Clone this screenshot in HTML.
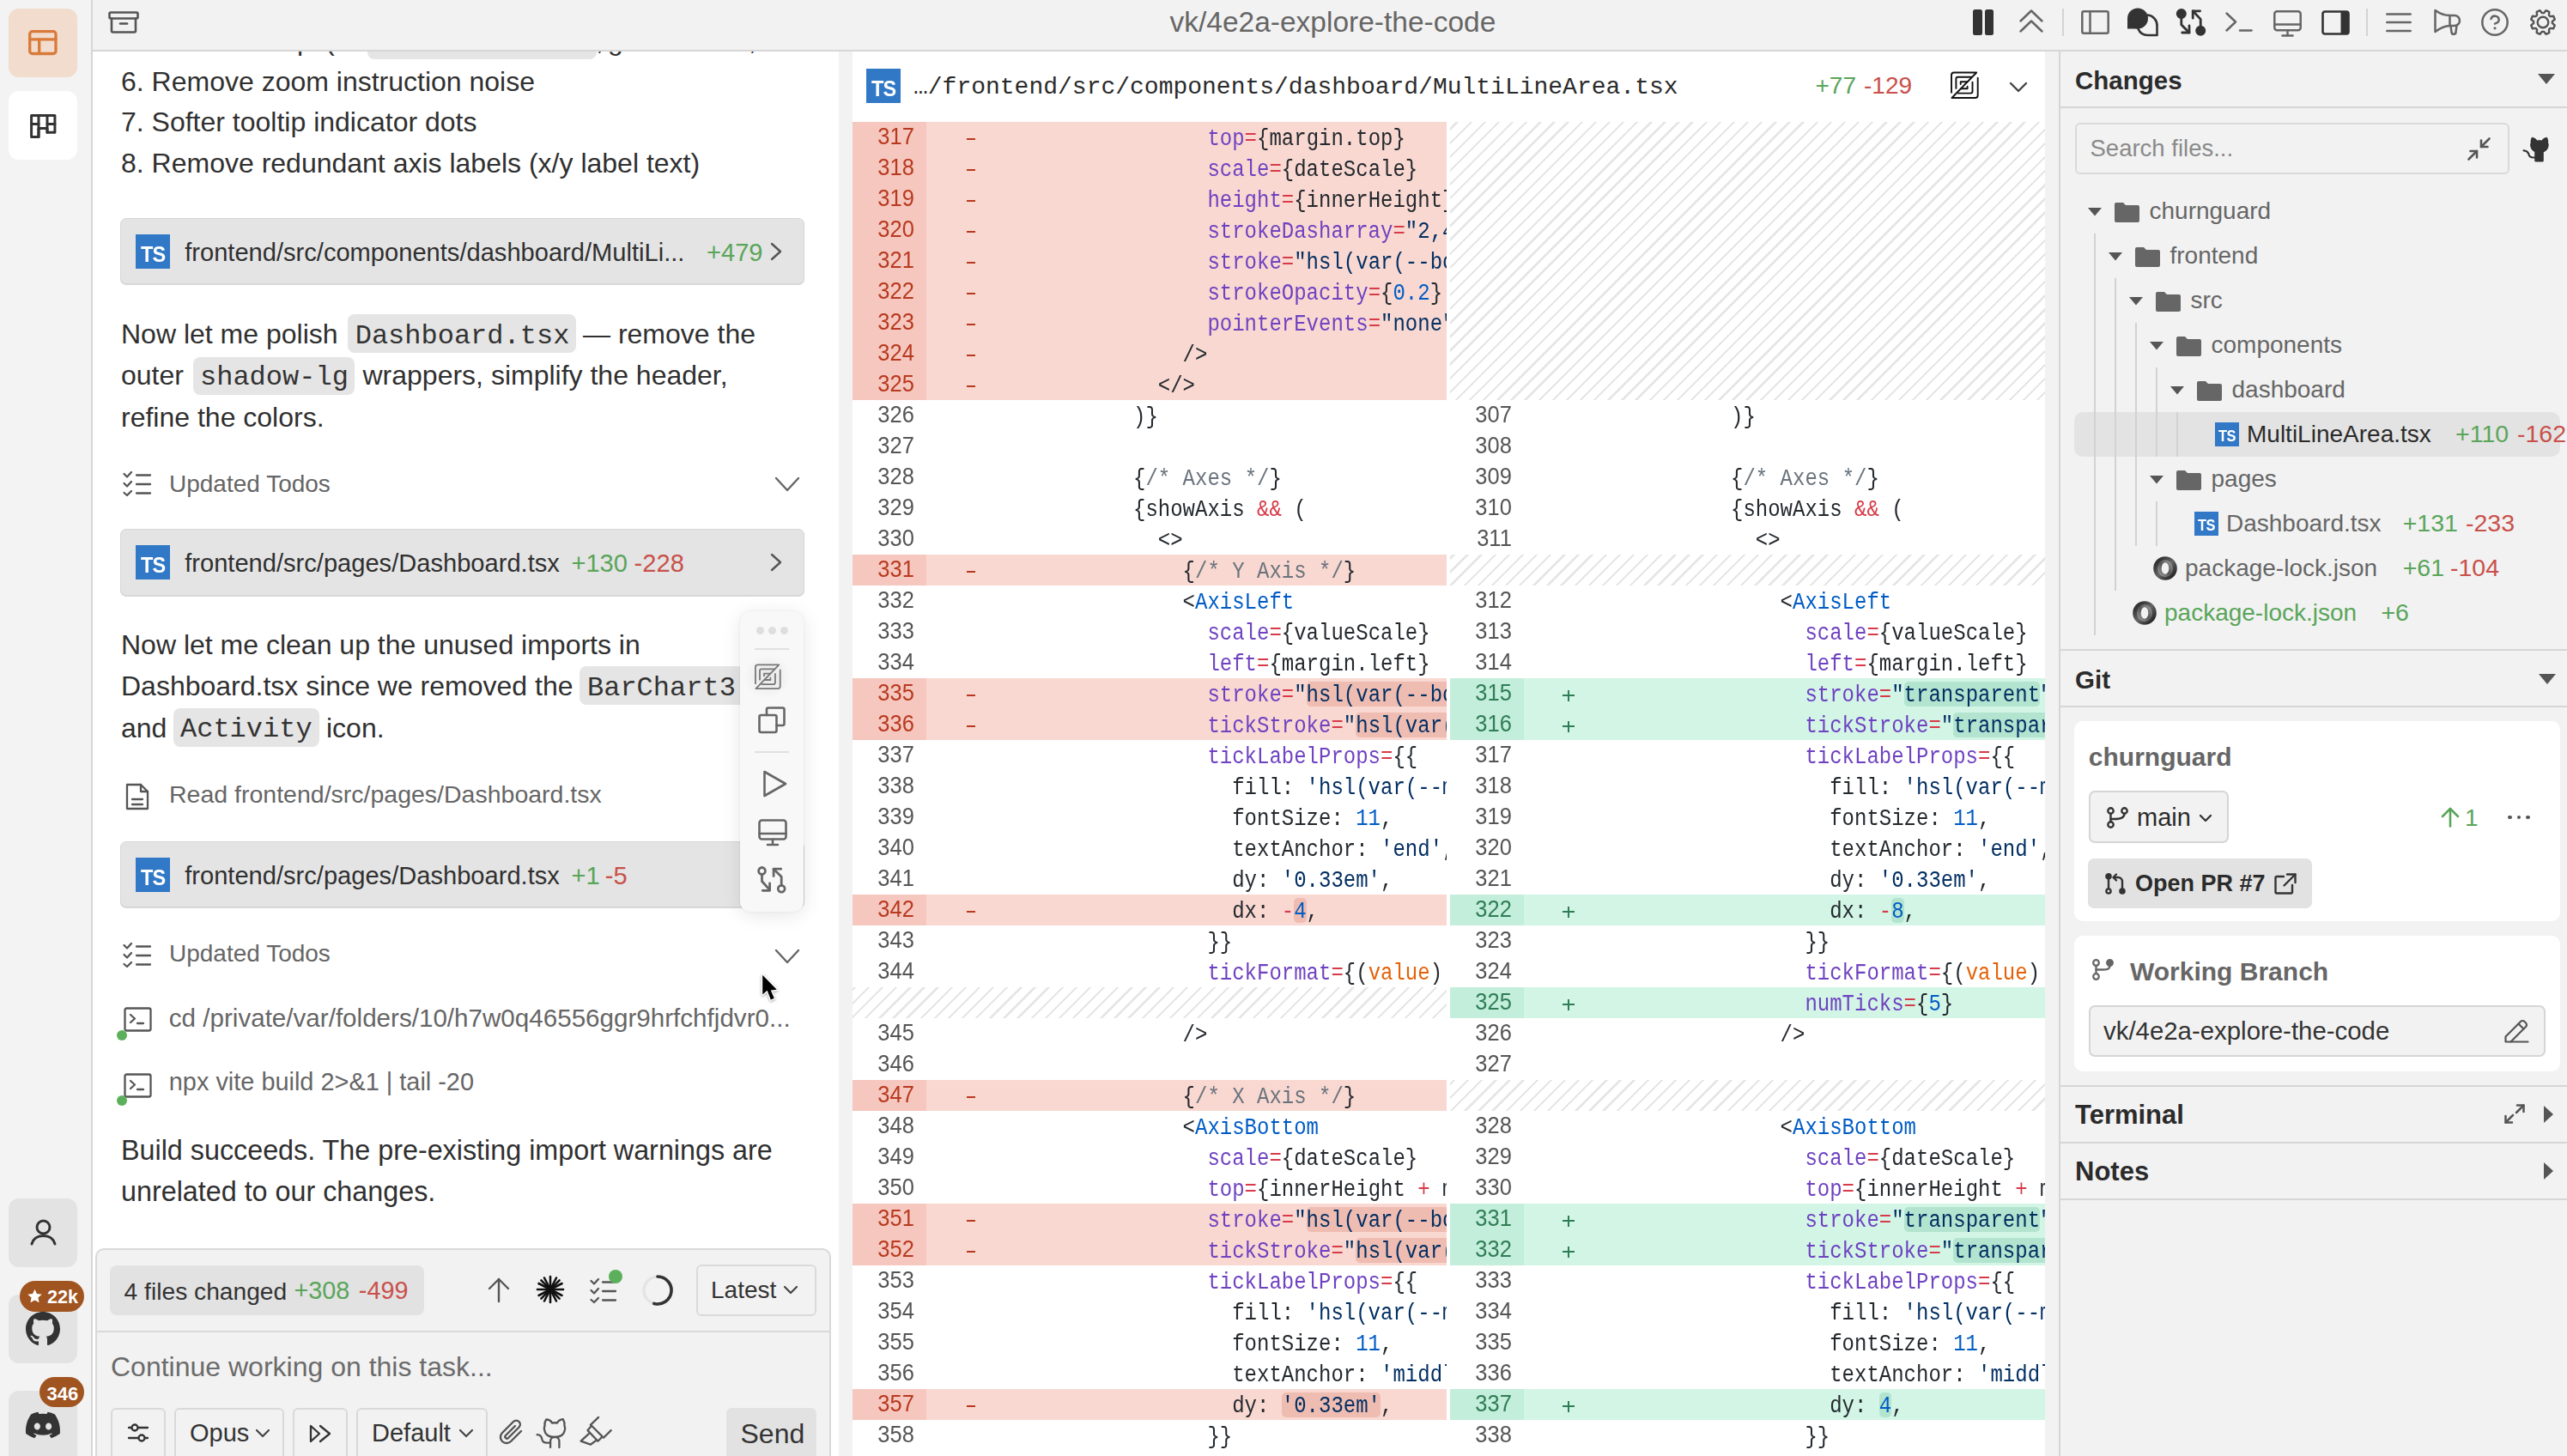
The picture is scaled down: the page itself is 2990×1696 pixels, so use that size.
<!DOCTYPE html><html><head><meta charset="utf-8"><title>vk</title><style>
*{box-sizing:border-box;margin:0;padding:0}
html,body{width:2990px;height:1696px;overflow:hidden;background:#f2f2f2;font-family:'Liberation Sans', sans-serif;color:#2b2b2b;position:relative}
.abs{position:absolute}
svg.abs{position:absolute;overflow:visible}
.t{position:absolute;white-space:pre;line-height:1}
.pane{position:absolute;overflow:hidden}
</style></head><body><div class="pane" style="left:108px;top:60px;width:869px;height:1636px;background:#fff"><div class="abs" style="left:320.0px;top:-36.0px;width:266.6px;height:44.8px;background:#e5e5e5;border-radius:8px"></div><div class="t" style="left:238.0px;top:-28.8px;font-size:32px;color:#303030;font-weight:400;font-family:'Liberation Sans', sans-serif;">p</div><div class="t" style="left:271.0px;top:-28.8px;font-size:32px;color:#303030;font-weight:400;font-family:'Liberation Sans', sans-serif;">(</div><div class="t" style="left:586.0px;top:-28.8px;font-size:32px;color:#303030;font-weight:400;font-family:'Liberation Sans', sans-serif;">,</div><div class="t" style="left:600.0px;top:-28.8px;font-size:32px;color:#303030;font-weight:400;font-family:'Liberation Sans', sans-serif;">g</div><div class="t" style="left:764.0px;top:-28.8px;font-size:32px;color:#303030;font-weight:400;font-family:'Liberation Sans', sans-serif;">,</div><div class="t" style="left:33.0px;top:18.7px;font-size:32px;color:#303030;font-weight:400;font-family:'Liberation Sans', sans-serif;">6. Remove zoom instruction noise</div><div class="t" style="left:33.0px;top:66.2px;font-size:32px;color:#303030;font-weight:400;font-family:'Liberation Sans', sans-serif;">7. Softer tooltip indicator dots</div><div class="t" style="left:33.0px;top:113.6px;font-size:32px;color:#303030;font-weight:400;font-family:'Liberation Sans', sans-serif;">8. Remove redundant axis labels (x/y label text)</div><div class="abs" style="left:32.0px;top:194.0px;width:797.0px;height:77.0px;background:#e4e4e4;border:1.5px solid #d6d6d6;border-radius:7px;box-shadow:0 1px 0 #d9d9d9"></div><div class="abs" style="left:50.0px;top:213.0px;width:40.0px;height:40.0px;background:#3178c6;"><div class="t" style="left:6.40px;top:10.10px;font-size:26.70px;font-weight:700;color:#fff;letter-spacing:-1.00px;line-height:1;transform:scaleX(0.88);transform-origin:0 0">TS</div></div><div class="t" style="left:107.2px;top:219.6px;font-size:29.1px;color:#303030;font-weight:400;font-family:'Liberation Sans', sans-serif;">frontend/src/components/dashboard/MultiLi...</div><div class="t" style="left:715.0px;top:219.6px;font-size:29.1px;color:#5aa55a;font-weight:400;font-family:'Liberation Sans', sans-serif;">+479</div><svg class="abs" style="left:789.0px;top:222.0px;" width="14" height="22" viewBox="0 0 14 22" fill="none" stroke-linecap="round" stroke-linejoin="round"><path d="M2 2 L12 11 L2 20" stroke="#555" stroke-width="2.4"/></svg><div class="abs" style="left:297.0px;top:306.0px;width:266.0px;height:45.0px;background:#e5e5e5;border-radius:8px"></div><div class="abs" style="left:116.5px;top:355.5px;width:188.3px;height:44.5px;background:#e5e5e5;border-radius:8px"></div><div class="t" style="left:33.0px;top:313.2px;font-size:32px;color:#303030;font-weight:400;font-family:'Liberation Sans', sans-serif;">Now let me polish</div><div class="t" style="left:305.7px;top:316.1px;font-size:32px;color:#333;font-weight:400;font-family:'Liberation Mono', monospace;">Dashboard.tsx</div><div class="t" style="left:571.0px;top:313.2px;font-size:32px;color:#303030;font-weight:400;font-family:'Liberation Sans', sans-serif;">— remove the</div><div class="t" style="left:33.0px;top:360.8px;font-size:32px;color:#303030;font-weight:400;font-family:'Liberation Sans', sans-serif;">outer</div><div class="t" style="left:125.0px;top:363.7px;font-size:32px;color:#333;font-weight:400;font-family:'Liberation Mono', monospace;">shadow-lg</div><div class="t" style="left:314.5px;top:360.8px;font-size:32px;color:#303030;font-weight:400;font-family:'Liberation Sans', sans-serif;">wrappers, simplify the header,</div><div class="t" style="left:33.0px;top:409.8px;font-size:32px;color:#303030;font-weight:400;font-family:'Liberation Sans', sans-serif;">refine the colors.</div><svg class="abs" style="left:35.0px;top:488.0px;" width="34" height="30" viewBox="0 0 34 30" fill="none" stroke-linecap="round" stroke-linejoin="round"><g stroke="#555" stroke-width="2.3"><path d="M1.5 4 L5 7.5 L10 2"/><path d="M1.5 15 L5 18.5 L10 13"/><path d="M1.5 26 L5 29 L10 24"/><path d="M16 5.5 H32"/><path d="M16 16 H32"/><path d="M16 26.5 H32"/></g></svg><div class="t" style="left:89.0px;top:489.8px;font-size:28px;color:#666666;font-weight:400;font-family:'Liberation Sans', sans-serif;">Updated Todos</div><svg class="abs" style="left:793.7px;top:495.0px;" width="30" height="18" viewBox="0 0 30 18" fill="none" stroke-linecap="round" stroke-linejoin="round"><path d="M2 2 L15.0 16 L28 2" stroke="#666" stroke-width="2.4"/></svg><div class="abs" style="left:32.0px;top:556.4px;width:797.0px;height:77.3px;background:#e4e4e4;border:1.5px solid #d6d6d6;border-radius:7px;box-shadow:0 1px 0 #d9d9d9"></div><div class="abs" style="left:50.0px;top:575.4px;width:40.0px;height:40.0px;background:#3178c6;"><div class="t" style="left:6.40px;top:10.10px;font-size:26.70px;font-weight:700;color:#fff;letter-spacing:-1.00px;line-height:1;transform:scaleX(0.88);transform-origin:0 0">TS</div></div><div class="t" style="left:107.2px;top:582.0px;font-size:29.1px;color:#303030;font-weight:400;font-family:'Liberation Sans', sans-serif;">frontend/src/pages/Dashboard.tsx</div><div class="t" style="left:557.4px;top:582.0px;font-size:29.1px;color:#5aa55a;font-weight:400;font-family:'Liberation Sans', sans-serif;">+130</div><div class="t" style="left:630.6px;top:582.0px;font-size:29.1px;color:#c9504a;font-weight:400;font-family:'Liberation Sans', sans-serif;">-228</div><svg class="abs" style="left:789.0px;top:584.4px;" width="14" height="22" viewBox="0 0 14 22" fill="none" stroke-linecap="round" stroke-linejoin="round"><path d="M2 2 L12 11 L2 20" stroke="#555" stroke-width="2.4"/></svg><div class="abs" style="left:567.4px;top:716.0px;width:204.6px;height:45.0px;background:#e5e5e5;border-radius:8px"></div><div class="abs" style="left:93.5px;top:765.4px;width:170.0px;height:44.6px;background:#e5e5e5;border-radius:8px"></div><div class="t" style="left:33.0px;top:674.6px;font-size:32px;color:#303030;font-weight:400;font-family:'Liberation Sans', sans-serif;">Now let me clean up the unused imports in</div><div class="t" style="left:33.0px;top:722.8px;font-size:32px;color:#303030;font-weight:400;font-family:'Liberation Sans', sans-serif;">Dashboard.tsx since we removed the</div><div class="t" style="left:576.0px;top:725.7px;font-size:32px;color:#333;font-weight:400;font-family:'Liberation Mono', monospace;">BarChart3</div><div class="t" style="left:33.0px;top:771.5px;font-size:32px;color:#303030;font-weight:400;font-family:'Liberation Sans', sans-serif;">and</div><div class="t" style="left:102.0px;top:774.4px;font-size:32px;color:#333;font-weight:400;font-family:'Liberation Mono', monospace;">Activity</div><div class="t" style="left:272.0px;top:771.5px;font-size:32px;color:#303030;font-weight:400;font-family:'Liberation Sans', sans-serif;">icon.</div><svg class="abs" style="left:36.8px;top:851.0px;" width="30" height="34" viewBox="0 0 30 34" fill="none" stroke-linecap="round" stroke-linejoin="round"><g stroke="#555" stroke-width="2.3"><path d="M3 3 H19 L27 11 V31 H3 Z"/><path d="M19 3 V11 H27"/><path d="M9 20 H21"/><path d="M9 26 H21"/></g></svg><div class="t" style="left:89.0px;top:851.1px;font-size:28.5px;color:#666666;font-weight:400;font-family:'Liberation Sans', sans-serif;">Read frontend/src/pages/Dashboard.tsx</div><div class="abs" style="left:32.0px;top:920.0px;width:797.0px;height:77.2px;background:#e4e4e4;border:1.5px solid #d6d6d6;border-radius:7px;box-shadow:0 1px 0 #d9d9d9"></div><div class="abs" style="left:50.0px;top:939.0px;width:40.0px;height:40.0px;background:#3178c6;"><div class="t" style="left:6.40px;top:10.10px;font-size:26.70px;font-weight:700;color:#fff;letter-spacing:-1.00px;line-height:1;transform:scaleX(0.88);transform-origin:0 0">TS</div></div><div class="t" style="left:107.2px;top:945.6px;font-size:29.1px;color:#303030;font-weight:400;font-family:'Liberation Sans', sans-serif;">frontend/src/pages/Dashboard.tsx</div><div class="t" style="left:557.4px;top:945.6px;font-size:29.1px;color:#5aa55a;font-weight:400;font-family:'Liberation Sans', sans-serif;">+1</div><div class="t" style="left:596.8px;top:945.6px;font-size:29.1px;color:#c9504a;font-weight:400;font-family:'Liberation Sans', sans-serif;">-5</div><svg class="abs" style="left:35.0px;top:1037.0px;" width="34" height="30" viewBox="0 0 34 30" fill="none" stroke-linecap="round" stroke-linejoin="round"><g stroke="#555" stroke-width="2.3"><path d="M1.5 4 L5 7.5 L10 2"/><path d="M1.5 15 L5 18.5 L10 13"/><path d="M1.5 26 L5 29 L10 24"/><path d="M16 5.5 H32"/><path d="M16 16 H32"/><path d="M16 26.5 H32"/></g></svg><div class="t" style="left:89.0px;top:1036.9px;font-size:28px;color:#666666;font-weight:400;font-family:'Liberation Sans', sans-serif;">Updated Todos</div><svg class="abs" style="left:793.7px;top:1044.5px;" width="30" height="18" viewBox="0 0 30 18" fill="none" stroke-linecap="round" stroke-linejoin="round"><path d="M2 2 L15.0 16 L28 2" stroke="#666" stroke-width="2.4"/></svg><svg class="abs" style="left:36.0px;top:1113.0px;" width="33" height="29" viewBox="0 0 33 29" fill="none" stroke-linecap="round" stroke-linejoin="round"><g stroke="#555" stroke-width="2.3"><rect x="1.5" y="1.5" width="30" height="26" rx="2"/><path d="M8 9 L13 13.5 L8 18"/><path d="M16 19 H23"/></g></svg><div class="abs" style="left:27.9px;top:1140.0px;width:12.0px;height:12.0px;background:#5cb05c;border-radius:50%"></div><div class="t" style="left:88.8px;top:1110.5px;font-size:29.6px;color:#666666;font-weight:400;font-family:'Liberation Sans', sans-serif;">cd /private/var/folders/10/h7w0q46556ggr9hrfchfjdvr0...</div><svg class="abs" style="left:36.0px;top:1190.0px;" width="33" height="29" viewBox="0 0 33 29" fill="none" stroke-linecap="round" stroke-linejoin="round"><g stroke="#555" stroke-width="2.3"><rect x="1.5" y="1.5" width="30" height="26" rx="2"/><path d="M8 9 L13 13.5 L8 18"/><path d="M16 19 H23"/></g></svg><div class="abs" style="left:27.9px;top:1216.0px;width:12.0px;height:12.0px;background:#5cb05c;border-radius:50%"></div><div class="t" style="left:88.8px;top:1186.4px;font-size:28.9px;color:#666666;font-weight:400;font-family:'Liberation Sans', sans-serif;">npx vite build 2&gt;&amp;1 | tail -20</div><div class="t" style="left:33.0px;top:1264.2px;font-size:32.3px;color:#303030;font-weight:400;font-family:'Liberation Sans', sans-serif;">Build succeeds. The pre-existing import warnings are</div><div class="t" style="left:33.0px;top:1312.3px;font-size:32.3px;color:#303030;font-weight:400;font-family:'Liberation Sans', sans-serif;">unrelated to our changes.</div><div class="abs" style="left:754.0px;top:651.5px;width:74.0px;height:350.8px;background:#f8f8f8;border-radius:12px;box-shadow:0 4px 22px rgba(0,0,0,0.10),0 0 2px rgba(0,0,0,0.10)"></div><div class="abs" style="left:772.5px;top:669.5px;width:9.0px;height:9.0px;background:#dedede;border-radius:50%"></div><div class="abs" style="left:786.5px;top:669.5px;width:9.0px;height:9.0px;background:#dedede;border-radius:50%"></div><div class="abs" style="left:800.5px;top:669.5px;width:9.0px;height:9.0px;background:#dedede;border-radius:50%"></div><div class="abs" style="left:771.0px;top:694.5px;width:40.0px;height:2.0px;background:#e0e0e0;"></div><div class="abs" style="left:771.0px;top:814.5px;width:40.0px;height:2.0px;background:#e0e0e0;"></div><div class="abs" style="left:758.0px;top:702.0px;width:56.0px;height:52.0px;background:radial-gradient(closest-side, rgba(0,0,0,0.07), rgba(0,0,0,0));"></div><svg class="abs" style="left:771.0px;top:713.5px;" width="30.5" height="29.092307692307692" viewBox="7 6.5 32.5 31" fill="none" stroke-linecap="round" stroke-linejoin="round"><g stroke="#777" stroke-width="1.9"><path d="M8 30.2 V10 a3 3 0 0 1 3 -3 H37.2 L8.5 36.5 H35.7 a3 3 0 0 0 3 -3 V13.3"/><path d="M13.4 25.4 V14.2 a2 2 0 0 1 2 -2 H31.4"/><path d="M15.7 31.1 H30.5 a2 2 0 0 0 2 -2 V18.1"/><path d="M18.7 20.6 V17.8 H26.6"/><path d="M19.6 25.7 H26.6 V23.3"/></g></svg><svg class="abs" style="left:775.0px;top:763.0px;" width="32" height="32" viewBox="0 0 32 32" fill="none" stroke-linecap="round" stroke-linejoin="round"><g stroke="#666" stroke-width="2.6"><rect x="1.5" y="10" width="20" height="20" rx="2"/><path d="M10 10 V3.5 a2 2 0 0 1 2-2 H28.5 a2 2 0 0 1 2 2 V20 a2 2 0 0 1 -2 2 H21.5"/></g></svg><svg class="abs" style="left:780.0px;top:836.0px;" width="30" height="34" viewBox="0 0 30 34" fill="none" stroke-linecap="round" stroke-linejoin="round"><path d="M2.5 3 L27 17 L2.5 31 Z" stroke="#666" stroke-width="2.6"/></svg><svg class="abs" style="left:774.5px;top:894.3px;" width="34" height="32" viewBox="0 0 34 32" fill="none" stroke-linecap="round" stroke-linejoin="round"><g stroke="#666" stroke-width="2.6"><rect x="1.5" y="1.5" width="31" height="22" rx="3"/><path d="M1.5 17 H32.5"/><path d="M17 24 V29"/><path d="M11 30 H23"/></g></svg><svg class="abs" style="left:767.0px;top:940.0px;" width="50" height="50" viewBox="0 0 50 50" fill="none" stroke-linecap="round" stroke-linejoin="round"><g stroke="#666" stroke-width="2.8"><circle cx="12.5" cy="14.4" r="3.9"/><path d="M12.5 18.3 V26.5 L21.6 36.6"/><path d="M13.2 37.3 H21.6 V28.8"/><circle cx="35.2" cy="35.2" r="3.9"/><path d="M35.2 31.3 V21.3 L26.1 12.2"/><path d="M34.7 12.2 H26.1 V20.6"/></g></svg><svg class="abs" style="left:772.0px;top:1068.0px;filter:drop-shadow(0 1px 1.5px rgba(0,0,0,0.35))" width="32" height="42" viewBox="0 0 32 42" fill="none" stroke-linecap="round" stroke-linejoin="round"><path d="M8.2 7.7 L8.2 30.5 L13.6 25.8 L17.8 36.5 L21.8 34.8 L17.8 25.5 L24.8 24.8 Z" fill="#000" stroke="#fff" stroke-width="2.8" stroke-linejoin="round" paint-order="stroke"/></svg><div class="abs" style="left:2.7px;top:1394.0px;width:857.3px;height:266.0px;background:#f2f2f2;border:2px solid #d9d9d9;border-radius:10px"></div><div class="abs" style="left:20.0px;top:1413.7px;width:365.6px;height:57.9px;background:#e2e2e2;border-radius:8px"></div><div class="t" style="left:36.6px;top:1429.6px;font-size:28.2px;color:#333;font-weight:400;font-family:'Liberation Sans', sans-serif;">4 files changed</div><div class="t" style="left:234.5px;top:1429.1px;font-size:28.8px;color:#5aa55a;font-weight:400;font-family:'Liberation Sans', sans-serif;">+308</div><div class="t" style="left:309.8px;top:1429.1px;font-size:28.8px;color:#c9504a;font-weight:400;font-family:'Liberation Sans', sans-serif;">-499</div><div class="abs" style="left:4.0px;top:1489.5px;width:854.0px;height:2.0px;background:#d9d9d9;"></div><svg class="abs" style="left:459.0px;top:1427.0px;" width="28" height="31" viewBox="0 0 28 31" fill="none" stroke-linecap="round" stroke-linejoin="round"><g stroke="#555" stroke-width="2.4"><path d="M14 29 V3"/><path d="M3 14 L14 3 L25 14"/></g></svg><svg class="abs" style="left:516.0px;top:1425.0px;" width="34" height="34" viewBox="0 0 34 34" fill="none" stroke-linecap="round" stroke-linejoin="round"><g stroke="#111" stroke-width="2.6"><path d="M17 2 V32"/><path d="M2 17 H32"/><path d="M6.4 6.4 L27.6 27.6"/><path d="M27.6 6.4 L6.4 27.6"/><path d="M10 3.5 L24 30.5"/><path d="M24 3.5 L10 30.5"/><path d="M3.5 10 L30.5 24"/><path d="M3.5 24 L30.5 10"/></g></svg><svg class="abs" style="left:578.5px;top:1428.0px;" width="31" height="30" viewBox="0 0 31 30" fill="none" stroke-linecap="round" stroke-linejoin="round"><g stroke="#555" stroke-width="2.3"><path d="M1.5 4 L5 7.5 L10 2"/><path d="M1.5 15 L5 18.5 L10 13"/><path d="M1.5 26 L5 29 L10 24"/><path d="M15 5.5 H30"/><path d="M15 16 H30"/><path d="M15 26.5 H30"/></g></svg><div class="abs" style="left:601.0px;top:1419.0px;width:16.0px;height:16.0px;background:#5cb05c;border-radius:50%"></div><svg class="abs" style="left:640.0px;top:1425.0px;" width="36" height="36" viewBox="0 0 36 36" fill="none" stroke-linecap="round" stroke-linejoin="round"><circle cx="18" cy="18" r="16" stroke="#e4e4e4" stroke-width="3.4"/><path d="M18 2 A16 16 0 1 1 13.86 33.45" stroke="#333" stroke-width="3.6"/></svg><div class="abs" style="left:702.6px;top:1412.6px;width:140.0px;height:60.4px;background:#f2f2f2;border:2px solid #dadada;border-radius:6px"></div><div class="t" style="left:720.0px;top:1428.7px;font-size:28px;color:#333;font-weight:400;font-family:'Liberation Sans', sans-serif;">Latest</div><svg class="abs" style="left:804.0px;top:1437.0px;" width="18" height="11" viewBox="0 0 18 11" fill="none" stroke-linecap="round" stroke-linejoin="round"><path d="M2 2 L9.0 9 L16 2" stroke="#444" stroke-width="2.2"/></svg><div class="t" style="left:21.0px;top:1515.8px;font-size:32px;color:#6b6b6b;font-weight:400;font-family:'Liberation Sans', sans-serif;">Continue working on this task...</div><div class="abs" style="left:21.0px;top:1580.0px;width:63.8px;height:80.0px;background:#f2f2f2;border:2px solid #d9d9d9;border-radius:6px"></div><svg class="abs" style="left:40.0px;top:1596.5px;" width="26" height="24" viewBox="0 0 26 24" fill="none" stroke-linecap="round" stroke-linejoin="round"><g stroke="#333" stroke-width="2.3"><path d="M2 6 H24"/><path d="M2 18 H24"/><circle cx="9" cy="6" r="3.5" fill="#f2f2f2"/><circle cx="17" cy="18" r="3.5" fill="#f2f2f2"/></g></svg><div class="abs" style="left:94.5px;top:1580.0px;width:128.5px;height:80.0px;background:#f2f2f2;border:2px solid #d9d9d9;border-radius:6px"></div><div class="t" style="left:113.0px;top:1595.3px;font-size:29px;color:#333;font-weight:400;font-family:'Liberation Sans', sans-serif;">Opus</div><svg class="abs" style="left:189.0px;top:1604.0px;" width="18" height="11" viewBox="0 0 18 11" fill="none" stroke-linecap="round" stroke-linejoin="round"><path d="M2 2 L9.0 9 L16 2" stroke="#444" stroke-width="2.2"/></svg><div class="abs" style="left:232.5px;top:1580.0px;width:64.5px;height:80.0px;background:#f2f2f2;border:2px solid #d9d9d9;border-radius:6px"></div><svg class="abs" style="left:252.0px;top:1598.5px;" width="28" height="22" viewBox="0 0 28 22" fill="none" stroke-linecap="round" stroke-linejoin="round"><g stroke="#333" stroke-width="2.3"><path d="M2 2 L12 11 L2 20 Z"/><path d="M13 2 L24 11 L13 20"/></g></svg><div class="abs" style="left:306.6px;top:1580.0px;width:153.4px;height:80.0px;background:#f2f2f2;border:2px solid #d9d9d9;border-radius:6px"></div><div class="t" style="left:325.0px;top:1595.3px;font-size:29px;color:#333;font-weight:400;font-family:'Liberation Sans', sans-serif;">Default</div><svg class="abs" style="left:426.0px;top:1604.0px;" width="18" height="11" viewBox="0 0 18 11" fill="none" stroke-linecap="round" stroke-linejoin="round"><path d="M2 2 L9.0 9 L16 2" stroke="#444" stroke-width="2.2"/></svg><svg class="abs" style="left:472.0px;top:1592.0px;" width="32" height="34" viewBox="0 0 32 34" fill="none" stroke-linecap="round" stroke-linejoin="round"><path d="M27 15 L15 27 a7 7 0 0 1 -10 -10 L18 4 a4.5 4.5 0 0 1 6.5 6.5 L12 23 a2 2 0 0 1 -3 -3 L20 9" stroke="#555" stroke-width="2.4"/></svg><svg class="abs" style="left:512.0px;top:1588.0px;" width="44" height="40" viewBox="0 0 44 40" fill="none" stroke-linecap="round" stroke-linejoin="round"><g stroke="#555" stroke-width="2.3"><path d="M16.2 5.5 C14.5 8 14.2 11 14.5 13 C13.5 14.5 13.8 16.5 14.2 18 C15 22.5 18.5 26 26 26 C33.5 26 37 22.5 37.8 18 C38.2 16.5 38.5 14.5 37.5 13 C37.8 11 37.5 8 35.8 5.2 C33 5.5 30 7.5 29 9.5 C27 9.2 25 9.2 23 9.5 C22 7.5 19 5.5 16.2 5.5 Z"/><path d="M21.1 38 V31 a5.15 5.15 0 0 1 10.3 0 V38"/><path d="M5.6 23.1 C9 23 11 26 11.5 29 C12 31.5 14 32.7 17 32.7 H21"/></g></svg><svg class="abs" style="left:562.0px;top:1585.0px;" width="44" height="42" viewBox="0 0 44 42" fill="none" stroke-linecap="round" stroke-linejoin="round"><g stroke="#555" stroke-width="2.3"><path d="M27.1 5.9 L17.8 14.8"/><path d="M14.5 21.1 L19.1 15.8 L31.7 28.4 L26.4 33.7 Z"/><path d="M15.8 25.1 L6.6 33.7 L17.8 37.7 L25.1 32.4"/><path d="M33 29.7 L41.7 21.1"/></g></svg><div class="abs" style="left:737.7px;top:1580.0px;width:104.9px;height:80.0px;background:#e2e2e2;border-radius:6px"></div><div class="t" style="left:754.5px;top:1593.8px;font-size:32px;color:#333;font-weight:400;font-family:'Liberation Sans', sans-serif;">Send</div></div><div class="pane" style="left:993px;top:60px;width:1389px;height:1636px;background:#fff"><div class="abs" style="left:16.0px;top:20.0px;width:40.0px;height:40.0px;background:#3178c6;"><div class="t" style="left:6.40px;top:10.10px;font-size:26.70px;font-weight:700;color:#fff;letter-spacing:-1.00px;line-height:1;transform:scaleX(0.88);transform-origin:0 0">TS</div></div><div class="t" style="left:71.0px;top:27.7px;font-size:28px;color:#2b2b2b;font-weight:400;font-family:'Liberation Mono', monospace;">…/frontend/src/components/dashboard/MultiLineArea.tsx</div><div class="t" style="left:1121.5px;top:25.7px;font-size:28px;color:#5aa55a;font-weight:400;font-family:'Liberation Sans', sans-serif;">+77</div><div class="t" style="left:1178.0px;top:25.7px;font-size:28px;color:#c9504a;font-weight:400;font-family:'Liberation Sans', sans-serif;">-129</div><svg class="abs" style="left:1279.0px;top:24.0px;" width="32.5" height="31.0" viewBox="7 6.5 32.5 31" fill="none" stroke-linecap="round" stroke-linejoin="round"><g stroke="#111" stroke-width="1.9"><path d="M8 30.2 V10 a3 3 0 0 1 3 -3 H37.2 L8.5 36.5 H35.7 a3 3 0 0 0 3 -3 V13.3"/><path d="M13.4 25.4 V14.2 a2 2 0 0 1 2 -2 H31.4"/><path d="M15.7 31.1 H30.5 a2 2 0 0 0 2 -2 V18.1"/><path d="M18.7 20.6 V17.8 H26.6"/><path d="M19.6 25.7 H26.6 V23.3"/></g></svg><svg class="abs" style="left:1347.0px;top:35.0px;" width="22" height="13" viewBox="0 0 22 13" fill="none" stroke-linecap="round" stroke-linejoin="round"><path d="M2 2 L11.0 11 L20 2" stroke="#444" stroke-width="2.4"/></svg><div class="pane" style="left:0px;top:82px;width:692px;height:1554px"><div class="abs" style="left:0;top:0px;width:692px;height:36px;background:#f9d8d1"></div><div class="abs" style="left:0;top:0px;width:86px;height:36px;background:#f5c7be"></div><div class="t" style="right:620.2px;top:5.0px;font-size:25.5px;color:#b8391f;font-family:'Liberation Sans', sans-serif;transform:scaleY(1.07);transform-origin:0 21.68px">317</div><div class="abs" style="left:132.5px;top:18.9px;width:10.5px;height:2.5px;background:#b8391f"></div><div class="t" style="left:413.4px;top:9.0px;font-size:24px;font-family:'Liberation Mono', monospace;transform:scaleY(1.15);transform-origin:0 18.24px"><span style="color:#6f42c1">top</span><span style="color:#d73a49">=</span><span style="color:#24292e">{margin.top}</span></div><div class="abs" style="left:0;top:36px;width:692px;height:36px;background:#f9d8d1"></div><div class="abs" style="left:0;top:36px;width:86px;height:36px;background:#f5c7be"></div><div class="t" style="right:620.2px;top:41.0px;font-size:25.5px;color:#b8391f;font-family:'Liberation Sans', sans-serif;transform:scaleY(1.07);transform-origin:0 21.68px">318</div><div class="abs" style="left:132.5px;top:54.9px;width:10.5px;height:2.5px;background:#b8391f"></div><div class="t" style="left:413.4px;top:45.0px;font-size:24px;font-family:'Liberation Mono', monospace;transform:scaleY(1.15);transform-origin:0 18.24px"><span style="color:#6f42c1">scale</span><span style="color:#d73a49">=</span><span style="color:#24292e">{dateScale}</span></div><div class="abs" style="left:0;top:72px;width:692px;height:36px;background:#f9d8d1"></div><div class="abs" style="left:0;top:72px;width:86px;height:36px;background:#f5c7be"></div><div class="t" style="right:620.2px;top:77.0px;font-size:25.5px;color:#b8391f;font-family:'Liberation Sans', sans-serif;transform:scaleY(1.07);transform-origin:0 21.68px">319</div><div class="abs" style="left:132.5px;top:90.9px;width:10.5px;height:2.5px;background:#b8391f"></div><div class="t" style="left:413.4px;top:81.0px;font-size:24px;font-family:'Liberation Mono', monospace;transform:scaleY(1.15);transform-origin:0 18.24px"><span style="color:#6f42c1">height</span><span style="color:#d73a49">=</span><span style="color:#24292e">{innerHeight}</span></div><div class="abs" style="left:0;top:108px;width:692px;height:36px;background:#f9d8d1"></div><div class="abs" style="left:0;top:108px;width:86px;height:36px;background:#f5c7be"></div><div class="t" style="right:620.2px;top:113.0px;font-size:25.5px;color:#b8391f;font-family:'Liberation Sans', sans-serif;transform:scaleY(1.07);transform-origin:0 21.68px">320</div><div class="abs" style="left:132.5px;top:126.9px;width:10.5px;height:2.5px;background:#b8391f"></div><div class="t" style="left:413.4px;top:117.0px;font-size:24px;font-family:'Liberation Mono', monospace;transform:scaleY(1.15);transform-origin:0 18.24px"><span style="color:#6f42c1">strokeDasharray</span><span style="color:#d73a49">=</span><span style="color:#032f62">"2,4"</span></div><div class="abs" style="left:0;top:144px;width:692px;height:36px;background:#f9d8d1"></div><div class="abs" style="left:0;top:144px;width:86px;height:36px;background:#f5c7be"></div><div class="t" style="right:620.2px;top:149.0px;font-size:25.5px;color:#b8391f;font-family:'Liberation Sans', sans-serif;transform:scaleY(1.07);transform-origin:0 21.68px">321</div><div class="abs" style="left:132.5px;top:162.9px;width:10.5px;height:2.5px;background:#b8391f"></div><div class="t" style="left:413.4px;top:153.0px;font-size:24px;font-family:'Liberation Mono', monospace;transform:scaleY(1.15);transform-origin:0 18.24px"><span style="color:#6f42c1">stroke</span><span style="color:#d73a49">=</span><span style="color:#032f62">"hsl(var(--border))"</span></div><div class="abs" style="left:0;top:180px;width:692px;height:36px;background:#f9d8d1"></div><div class="abs" style="left:0;top:180px;width:86px;height:36px;background:#f5c7be"></div><div class="t" style="right:620.2px;top:185.0px;font-size:25.5px;color:#b8391f;font-family:'Liberation Sans', sans-serif;transform:scaleY(1.07);transform-origin:0 21.68px">322</div><div class="abs" style="left:132.5px;top:198.9px;width:10.5px;height:2.5px;background:#b8391f"></div><div class="t" style="left:413.4px;top:189.0px;font-size:24px;font-family:'Liberation Mono', monospace;transform:scaleY(1.15);transform-origin:0 18.24px"><span style="color:#6f42c1">strokeOpacity</span><span style="color:#d73a49">=</span><span style="color:#24292e">{</span><span style="color:#005cc5">0.2</span><span style="color:#24292e">}</span></div><div class="abs" style="left:0;top:216px;width:692px;height:36px;background:#f9d8d1"></div><div class="abs" style="left:0;top:216px;width:86px;height:36px;background:#f5c7be"></div><div class="t" style="right:620.2px;top:221.0px;font-size:25.5px;color:#b8391f;font-family:'Liberation Sans', sans-serif;transform:scaleY(1.07);transform-origin:0 21.68px">323</div><div class="abs" style="left:132.5px;top:234.9px;width:10.5px;height:2.5px;background:#b8391f"></div><div class="t" style="left:413.4px;top:225.0px;font-size:24px;font-family:'Liberation Mono', monospace;transform:scaleY(1.15);transform-origin:0 18.24px"><span style="color:#6f42c1">pointerEvents</span><span style="color:#d73a49">=</span><span style="color:#032f62">"none"</span></div><div class="abs" style="left:0;top:252px;width:692px;height:36px;background:#f9d8d1"></div><div class="abs" style="left:0;top:252px;width:86px;height:36px;background:#f5c7be"></div><div class="t" style="right:620.2px;top:257.0px;font-size:25.5px;color:#b8391f;font-family:'Liberation Sans', sans-serif;transform:scaleY(1.07);transform-origin:0 21.68px">324</div><div class="abs" style="left:132.5px;top:270.9px;width:10.5px;height:2.5px;background:#b8391f"></div><div class="t" style="left:384.6px;top:261.0px;font-size:24px;font-family:'Liberation Mono', monospace;transform:scaleY(1.15);transform-origin:0 18.24px"><span style="color:#24292e">/&gt;</span></div><div class="abs" style="left:0;top:288px;width:692px;height:36px;background:#f9d8d1"></div><div class="abs" style="left:0;top:288px;width:86px;height:36px;background:#f5c7be"></div><div class="t" style="right:620.2px;top:293.0px;font-size:25.5px;color:#b8391f;font-family:'Liberation Sans', sans-serif;transform:scaleY(1.07);transform-origin:0 21.68px">325</div><div class="abs" style="left:132.5px;top:306.9px;width:10.5px;height:2.5px;background:#b8391f"></div><div class="t" style="left:355.8px;top:297.0px;font-size:24px;font-family:'Liberation Mono', monospace;transform:scaleY(1.15);transform-origin:0 18.24px"><span style="color:#24292e">&lt;/&gt;</span></div><div class="t" style="right:620.2px;top:329.0px;font-size:25.5px;color:#555;font-family:'Liberation Sans', sans-serif;transform:scaleY(1.07);transform-origin:0 21.68px">326</div><div class="t" style="left:327.0px;top:333.0px;font-size:24px;font-family:'Liberation Mono', monospace;transform:scaleY(1.15);transform-origin:0 18.24px"><span style="color:#24292e">)}</span></div><div class="t" style="right:620.2px;top:365.0px;font-size:25.5px;color:#555;font-family:'Liberation Sans', sans-serif;transform:scaleY(1.07);transform-origin:0 21.68px">327</div><div class="t" style="right:620.2px;top:401.0px;font-size:25.5px;color:#555;font-family:'Liberation Sans', sans-serif;transform:scaleY(1.07);transform-origin:0 21.68px">328</div><div class="t" style="left:327.0px;top:405.0px;font-size:24px;font-family:'Liberation Mono', monospace;transform:scaleY(1.15);transform-origin:0 18.24px"><span style="color:#24292e">{</span><span style="color:#6a737d">/* Axes */</span><span style="color:#24292e">}</span></div><div class="t" style="right:620.2px;top:437.0px;font-size:25.5px;color:#555;font-family:'Liberation Sans', sans-serif;transform:scaleY(1.07);transform-origin:0 21.68px">329</div><div class="t" style="left:327.0px;top:441.0px;font-size:24px;font-family:'Liberation Mono', monospace;transform:scaleY(1.15);transform-origin:0 18.24px"><span style="color:#24292e">{showAxis </span><span style="color:#d73a49">&amp;&amp;</span><span style="color:#24292e"> (</span></div><div class="t" style="right:620.2px;top:473.0px;font-size:25.5px;color:#555;font-family:'Liberation Sans', sans-serif;transform:scaleY(1.07);transform-origin:0 21.68px">330</div><div class="t" style="left:355.8px;top:477.0px;font-size:24px;font-family:'Liberation Mono', monospace;transform:scaleY(1.15);transform-origin:0 18.24px"><span style="color:#24292e">&lt;&gt;</span></div><div class="abs" style="left:0;top:504px;width:692px;height:36px;background:#f9d8d1"></div><div class="abs" style="left:0;top:504px;width:86px;height:36px;background:#f5c7be"></div><div class="t" style="right:620.2px;top:509.0px;font-size:25.5px;color:#b8391f;font-family:'Liberation Sans', sans-serif;transform:scaleY(1.07);transform-origin:0 21.68px">331</div><div class="abs" style="left:132.5px;top:522.9px;width:10.5px;height:2.5px;background:#b8391f"></div><div class="t" style="left:384.6px;top:513.0px;font-size:24px;font-family:'Liberation Mono', monospace;transform:scaleY(1.15);transform-origin:0 18.24px"><span style="color:#24292e">{</span><span style="color:#6a737d">/* Y Axis */</span><span style="color:#24292e">}</span></div><div class="t" style="right:620.2px;top:545.0px;font-size:25.5px;color:#555;font-family:'Liberation Sans', sans-serif;transform:scaleY(1.07);transform-origin:0 21.68px">332</div><div class="t" style="left:384.6px;top:549.0px;font-size:24px;font-family:'Liberation Mono', monospace;transform:scaleY(1.15);transform-origin:0 18.24px"><span style="color:#24292e">&lt;</span><span style="color:#005cc5">AxisLeft</span></div><div class="t" style="right:620.2px;top:581.0px;font-size:25.5px;color:#555;font-family:'Liberation Sans', sans-serif;transform:scaleY(1.07);transform-origin:0 21.68px">333</div><div class="t" style="left:413.4px;top:585.0px;font-size:24px;font-family:'Liberation Mono', monospace;transform:scaleY(1.15);transform-origin:0 18.24px"><span style="color:#6f42c1">scale</span><span style="color:#d73a49">=</span><span style="color:#24292e">{valueScale}</span></div><div class="t" style="right:620.2px;top:617.0px;font-size:25.5px;color:#555;font-family:'Liberation Sans', sans-serif;transform:scaleY(1.07);transform-origin:0 21.68px">334</div><div class="t" style="left:413.4px;top:621.0px;font-size:24px;font-family:'Liberation Mono', monospace;transform:scaleY(1.15);transform-origin:0 18.24px"><span style="color:#6f42c1">left</span><span style="color:#d73a49">=</span><span style="color:#24292e">{margin.left}</span></div><div class="abs" style="left:0;top:648px;width:692px;height:36px;background:#f9d8d1"></div><div class="abs" style="left:0;top:648px;width:86px;height:36px;background:#f5c7be"></div><div class="abs" style="left:528.6px;top:651.5px;width:576.0px;height:29px;background:#efbcb1;border-radius:5px"></div><div class="t" style="right:620.2px;top:653.0px;font-size:25.5px;color:#b8391f;font-family:'Liberation Sans', sans-serif;transform:scaleY(1.07);transform-origin:0 21.68px">335</div><div class="abs" style="left:132.5px;top:666.9px;width:10.5px;height:2.5px;background:#b8391f"></div><div class="t" style="left:413.4px;top:657.0px;font-size:24px;font-family:'Liberation Mono', monospace;transform:scaleY(1.15);transform-origin:0 18.24px"><span style="color:#6f42c1">stroke</span><span style="color:#d73a49">=</span><span style="color:#032f62">"hsl(var(--border))"</span></div><div class="abs" style="left:0;top:684px;width:692px;height:36px;background:#f9d8d1"></div><div class="abs" style="left:0;top:684px;width:86px;height:36px;background:#f5c7be"></div><div class="abs" style="left:586.2px;top:687.5px;width:576.0px;height:29px;background:#efbcb1;border-radius:5px"></div><div class="t" style="right:620.2px;top:689.0px;font-size:25.5px;color:#b8391f;font-family:'Liberation Sans', sans-serif;transform:scaleY(1.07);transform-origin:0 21.68px">336</div><div class="abs" style="left:132.5px;top:702.9px;width:10.5px;height:2.5px;background:#b8391f"></div><div class="t" style="left:413.4px;top:693.0px;font-size:24px;font-family:'Liberation Mono', monospace;transform:scaleY(1.15);transform-origin:0 18.24px"><span style="color:#6f42c1">tickStroke</span><span style="color:#d73a49">=</span><span style="color:#032f62">"hsl(var(--border))"</span></div><div class="t" style="right:620.2px;top:725.0px;font-size:25.5px;color:#555;font-family:'Liberation Sans', sans-serif;transform:scaleY(1.07);transform-origin:0 21.68px">337</div><div class="t" style="left:413.4px;top:729.0px;font-size:24px;font-family:'Liberation Mono', monospace;transform:scaleY(1.15);transform-origin:0 18.24px"><span style="color:#6f42c1">tickLabelProps</span><span style="color:#d73a49">=</span><span style="color:#24292e">{{</span></div><div class="t" style="right:620.2px;top:761.0px;font-size:25.5px;color:#555;font-family:'Liberation Sans', sans-serif;transform:scaleY(1.07);transform-origin:0 21.68px">338</div><div class="t" style="left:442.2px;top:765.0px;font-size:24px;font-family:'Liberation Mono', monospace;transform:scaleY(1.15);transform-origin:0 18.24px"><span style="color:#24292e">fill: </span><span style="color:#032f62">'hsl(var(--muted-foreground))'</span><span style="color:#24292e">,</span></div><div class="t" style="right:620.2px;top:797.0px;font-size:25.5px;color:#555;font-family:'Liberation Sans', sans-serif;transform:scaleY(1.07);transform-origin:0 21.68px">339</div><div class="t" style="left:442.2px;top:801.0px;font-size:24px;font-family:'Liberation Mono', monospace;transform:scaleY(1.15);transform-origin:0 18.24px"><span style="color:#24292e">fontSize: </span><span style="color:#005cc5">11</span><span style="color:#24292e">,</span></div><div class="t" style="right:620.2px;top:833.0px;font-size:25.5px;color:#555;font-family:'Liberation Sans', sans-serif;transform:scaleY(1.07);transform-origin:0 21.68px">340</div><div class="t" style="left:442.2px;top:837.0px;font-size:24px;font-family:'Liberation Mono', monospace;transform:scaleY(1.15);transform-origin:0 18.24px"><span style="color:#24292e">textAnchor: </span><span style="color:#032f62">'end'</span><span style="color:#24292e">,</span></div><div class="t" style="right:620.2px;top:869.0px;font-size:25.5px;color:#555;font-family:'Liberation Sans', sans-serif;transform:scaleY(1.07);transform-origin:0 21.68px">341</div><div class="t" style="left:442.2px;top:873.0px;font-size:24px;font-family:'Liberation Mono', monospace;transform:scaleY(1.15);transform-origin:0 18.24px"><span style="color:#24292e">dy: </span><span style="color:#032f62">'0.33em'</span><span style="color:#24292e">,</span></div><div class="abs" style="left:0;top:900px;width:692px;height:36px;background:#f9d8d1"></div><div class="abs" style="left:0;top:900px;width:86px;height:36px;background:#f5c7be"></div><div class="abs" style="left:514.2px;top:903.5px;width:14.4px;height:29px;background:#efbcb1;border-radius:5px"></div><div class="t" style="right:620.2px;top:905.0px;font-size:25.5px;color:#b8391f;font-family:'Liberation Sans', sans-serif;transform:scaleY(1.07);transform-origin:0 21.68px">342</div><div class="abs" style="left:132.5px;top:918.9px;width:10.5px;height:2.5px;background:#b8391f"></div><div class="t" style="left:442.2px;top:909.0px;font-size:24px;font-family:'Liberation Mono', monospace;transform:scaleY(1.15);transform-origin:0 18.24px"><span style="color:#24292e">dx: </span><span style="color:#d73a49">-</span><span style="color:#005cc5">4</span><span style="color:#24292e">,</span></div><div class="t" style="right:620.2px;top:941.0px;font-size:25.5px;color:#555;font-family:'Liberation Sans', sans-serif;transform:scaleY(1.07);transform-origin:0 21.68px">343</div><div class="t" style="left:413.4px;top:945.0px;font-size:24px;font-family:'Liberation Mono', monospace;transform:scaleY(1.15);transform-origin:0 18.24px"><span style="color:#24292e">}}</span></div><div class="t" style="right:620.2px;top:977.0px;font-size:25.5px;color:#555;font-family:'Liberation Sans', sans-serif;transform:scaleY(1.07);transform-origin:0 21.68px">344</div><div class="t" style="left:413.4px;top:981.0px;font-size:24px;font-family:'Liberation Mono', monospace;transform:scaleY(1.15);transform-origin:0 18.24px"><span style="color:#6f42c1">tickFormat</span><span style="color:#d73a49">=</span><span style="color:#24292e">{(</span><span style="color:#e36209">value</span><span style="color:#24292e">) =&gt; formatValue(value)}</span></div><div class="abs" style="left:0;top:1008px;width:692px;height:36px;background:repeating-linear-gradient(135deg,#e6e6e6 0px,#e6e6e6 2.4px,#ffffff 2.4px,#ffffff 11.4px);background-attachment:fixed"></div><div class="t" style="right:620.2px;top:1049.0px;font-size:25.5px;color:#555;font-family:'Liberation Sans', sans-serif;transform:scaleY(1.07);transform-origin:0 21.68px">345</div><div class="t" style="left:384.6px;top:1053.0px;font-size:24px;font-family:'Liberation Mono', monospace;transform:scaleY(1.15);transform-origin:0 18.24px"><span style="color:#24292e">/&gt;</span></div><div class="t" style="right:620.2px;top:1085.0px;font-size:25.5px;color:#555;font-family:'Liberation Sans', sans-serif;transform:scaleY(1.07);transform-origin:0 21.68px">346</div><div class="abs" style="left:0;top:1116px;width:692px;height:36px;background:#f9d8d1"></div><div class="abs" style="left:0;top:1116px;width:86px;height:36px;background:#f5c7be"></div><div class="t" style="right:620.2px;top:1121.0px;font-size:25.5px;color:#b8391f;font-family:'Liberation Sans', sans-serif;transform:scaleY(1.07);transform-origin:0 21.68px">347</div><div class="abs" style="left:132.5px;top:1134.9px;width:10.5px;height:2.5px;background:#b8391f"></div><div class="t" style="left:384.6px;top:1125.0px;font-size:24px;font-family:'Liberation Mono', monospace;transform:scaleY(1.15);transform-origin:0 18.24px"><span style="color:#24292e">{</span><span style="color:#6a737d">/* X Axis */</span><span style="color:#24292e">}</span></div><div class="t" style="right:620.2px;top:1157.0px;font-size:25.5px;color:#555;font-family:'Liberation Sans', sans-serif;transform:scaleY(1.07);transform-origin:0 21.68px">348</div><div class="t" style="left:384.6px;top:1161.0px;font-size:24px;font-family:'Liberation Mono', monospace;transform:scaleY(1.15);transform-origin:0 18.24px"><span style="color:#24292e">&lt;</span><span style="color:#005cc5">AxisBottom</span></div><div class="t" style="right:620.2px;top:1193.0px;font-size:25.5px;color:#555;font-family:'Liberation Sans', sans-serif;transform:scaleY(1.07);transform-origin:0 21.68px">349</div><div class="t" style="left:413.4px;top:1197.0px;font-size:24px;font-family:'Liberation Mono', monospace;transform:scaleY(1.15);transform-origin:0 18.24px"><span style="color:#6f42c1">scale</span><span style="color:#d73a49">=</span><span style="color:#24292e">{dateScale}</span></div><div class="t" style="right:620.2px;top:1229.0px;font-size:25.5px;color:#555;font-family:'Liberation Sans', sans-serif;transform:scaleY(1.07);transform-origin:0 21.68px">350</div><div class="t" style="left:413.4px;top:1233.0px;font-size:24px;font-family:'Liberation Mono', monospace;transform:scaleY(1.15);transform-origin:0 18.24px"><span style="color:#6f42c1">top</span><span style="color:#d73a49">=</span><span style="color:#24292e">{innerHeight </span><span style="color:#d73a49">+</span><span style="color:#24292e"> margin.top}</span></div><div class="abs" style="left:0;top:1260px;width:692px;height:36px;background:#f9d8d1"></div><div class="abs" style="left:0;top:1260px;width:86px;height:36px;background:#f5c7be"></div><div class="abs" style="left:528.6px;top:1263.5px;width:576.0px;height:29px;background:#efbcb1;border-radius:5px"></div><div class="t" style="right:620.2px;top:1265.0px;font-size:25.5px;color:#b8391f;font-family:'Liberation Sans', sans-serif;transform:scaleY(1.07);transform-origin:0 21.68px">351</div><div class="abs" style="left:132.5px;top:1278.9px;width:10.5px;height:2.5px;background:#b8391f"></div><div class="t" style="left:413.4px;top:1269.0px;font-size:24px;font-family:'Liberation Mono', monospace;transform:scaleY(1.15);transform-origin:0 18.24px"><span style="color:#6f42c1">stroke</span><span style="color:#d73a49">=</span><span style="color:#032f62">"hsl(var(--border))"</span></div><div class="abs" style="left:0;top:1296px;width:692px;height:36px;background:#f9d8d1"></div><div class="abs" style="left:0;top:1296px;width:86px;height:36px;background:#f5c7be"></div><div class="abs" style="left:586.2px;top:1299.5px;width:576.0px;height:29px;background:#efbcb1;border-radius:5px"></div><div class="t" style="right:620.2px;top:1301.0px;font-size:25.5px;color:#b8391f;font-family:'Liberation Sans', sans-serif;transform:scaleY(1.07);transform-origin:0 21.68px">352</div><div class="abs" style="left:132.5px;top:1314.9px;width:10.5px;height:2.5px;background:#b8391f"></div><div class="t" style="left:413.4px;top:1305.0px;font-size:24px;font-family:'Liberation Mono', monospace;transform:scaleY(1.15);transform-origin:0 18.24px"><span style="color:#6f42c1">tickStroke</span><span style="color:#d73a49">=</span><span style="color:#032f62">"hsl(var(--border))"</span></div><div class="t" style="right:620.2px;top:1337.0px;font-size:25.5px;color:#555;font-family:'Liberation Sans', sans-serif;transform:scaleY(1.07);transform-origin:0 21.68px">353</div><div class="t" style="left:413.4px;top:1341.0px;font-size:24px;font-family:'Liberation Mono', monospace;transform:scaleY(1.15);transform-origin:0 18.24px"><span style="color:#6f42c1">tickLabelProps</span><span style="color:#d73a49">=</span><span style="color:#24292e">{{</span></div><div class="t" style="right:620.2px;top:1373.0px;font-size:25.5px;color:#555;font-family:'Liberation Sans', sans-serif;transform:scaleY(1.07);transform-origin:0 21.68px">354</div><div class="t" style="left:442.2px;top:1377.0px;font-size:24px;font-family:'Liberation Mono', monospace;transform:scaleY(1.15);transform-origin:0 18.24px"><span style="color:#24292e">fill: </span><span style="color:#032f62">'hsl(var(--muted-foreground))'</span><span style="color:#24292e">,</span></div><div class="t" style="right:620.2px;top:1409.0px;font-size:25.5px;color:#555;font-family:'Liberation Sans', sans-serif;transform:scaleY(1.07);transform-origin:0 21.68px">355</div><div class="t" style="left:442.2px;top:1413.0px;font-size:24px;font-family:'Liberation Mono', monospace;transform:scaleY(1.15);transform-origin:0 18.24px"><span style="color:#24292e">fontSize: </span><span style="color:#005cc5">11</span><span style="color:#24292e">,</span></div><div class="t" style="right:620.2px;top:1445.0px;font-size:25.5px;color:#555;font-family:'Liberation Sans', sans-serif;transform:scaleY(1.07);transform-origin:0 21.68px">356</div><div class="t" style="left:442.2px;top:1449.0px;font-size:24px;font-family:'Liberation Mono', monospace;transform:scaleY(1.15);transform-origin:0 18.24px"><span style="color:#24292e">textAnchor: </span><span style="color:#032f62">'middle'</span><span style="color:#24292e">,</span></div><div class="abs" style="left:0;top:1476px;width:692px;height:36px;background:#f9d8d1"></div><div class="abs" style="left:0;top:1476px;width:86px;height:36px;background:#f5c7be"></div><div class="abs" style="left:499.8px;top:1479.5px;width:115.2px;height:29px;background:#efbcb1;border-radius:5px"></div><div class="t" style="right:620.2px;top:1481.0px;font-size:25.5px;color:#b8391f;font-family:'Liberation Sans', sans-serif;transform:scaleY(1.07);transform-origin:0 21.68px">357</div><div class="abs" style="left:132.5px;top:1494.9px;width:10.5px;height:2.5px;background:#b8391f"></div><div class="t" style="left:442.2px;top:1485.0px;font-size:24px;font-family:'Liberation Mono', monospace;transform:scaleY(1.15);transform-origin:0 18.24px"><span style="color:#24292e">dy: </span><span style="color:#032f62">'0.33em'</span><span style="color:#24292e">,</span></div><div class="t" style="right:620.2px;top:1517.0px;font-size:25.5px;color:#555;font-family:'Liberation Sans', sans-serif;transform:scaleY(1.07);transform-origin:0 21.68px">358</div><div class="t" style="left:413.4px;top:1521.0px;font-size:24px;font-family:'Liberation Mono', monospace;transform:scaleY(1.15);transform-origin:0 18.24px"><span style="color:#24292e">}}</span></div></div><div class="pane" style="left:696px;top:82px;width:693px;height:1554px"><div class="abs" style="left:0;top:0px;width:693px;height:36px;background:repeating-linear-gradient(135deg,#e6e6e6 0px,#e6e6e6 2.4px,#ffffff 2.4px,#ffffff 11.4px);background-attachment:fixed"></div><div class="abs" style="left:0;top:36px;width:693px;height:36px;background:repeating-linear-gradient(135deg,#e6e6e6 0px,#e6e6e6 2.4px,#ffffff 2.4px,#ffffff 11.4px);background-attachment:fixed"></div><div class="abs" style="left:0;top:72px;width:693px;height:36px;background:repeating-linear-gradient(135deg,#e6e6e6 0px,#e6e6e6 2.4px,#ffffff 2.4px,#ffffff 11.4px);background-attachment:fixed"></div><div class="abs" style="left:0;top:108px;width:693px;height:36px;background:repeating-linear-gradient(135deg,#e6e6e6 0px,#e6e6e6 2.4px,#ffffff 2.4px,#ffffff 11.4px);background-attachment:fixed"></div><div class="abs" style="left:0;top:144px;width:693px;height:36px;background:repeating-linear-gradient(135deg,#e6e6e6 0px,#e6e6e6 2.4px,#ffffff 2.4px,#ffffff 11.4px);background-attachment:fixed"></div><div class="abs" style="left:0;top:180px;width:693px;height:36px;background:repeating-linear-gradient(135deg,#e6e6e6 0px,#e6e6e6 2.4px,#ffffff 2.4px,#ffffff 11.4px);background-attachment:fixed"></div><div class="abs" style="left:0;top:216px;width:693px;height:36px;background:repeating-linear-gradient(135deg,#e6e6e6 0px,#e6e6e6 2.4px,#ffffff 2.4px,#ffffff 11.4px);background-attachment:fixed"></div><div class="abs" style="left:0;top:252px;width:693px;height:36px;background:repeating-linear-gradient(135deg,#e6e6e6 0px,#e6e6e6 2.4px,#ffffff 2.4px,#ffffff 11.4px);background-attachment:fixed"></div><div class="abs" style="left:0;top:288px;width:693px;height:36px;background:repeating-linear-gradient(135deg,#e6e6e6 0px,#e6e6e6 2.4px,#ffffff 2.4px,#ffffff 11.4px);background-attachment:fixed"></div><div class="t" style="right:621.2px;top:329.0px;font-size:25.5px;color:#555;font-family:'Liberation Sans', sans-serif;transform:scaleY(1.07);transform-origin:0 21.68px">307</div><div class="t" style="left:327.0px;top:333.0px;font-size:24px;font-family:'Liberation Mono', monospace;transform:scaleY(1.15);transform-origin:0 18.24px"><span style="color:#24292e">)}</span></div><div class="t" style="right:621.2px;top:365.0px;font-size:25.5px;color:#555;font-family:'Liberation Sans', sans-serif;transform:scaleY(1.07);transform-origin:0 21.68px">308</div><div class="t" style="right:621.2px;top:401.0px;font-size:25.5px;color:#555;font-family:'Liberation Sans', sans-serif;transform:scaleY(1.07);transform-origin:0 21.68px">309</div><div class="t" style="left:327.0px;top:405.0px;font-size:24px;font-family:'Liberation Mono', monospace;transform:scaleY(1.15);transform-origin:0 18.24px"><span style="color:#24292e">{</span><span style="color:#6a737d">/* Axes */</span><span style="color:#24292e">}</span></div><div class="t" style="right:621.2px;top:437.0px;font-size:25.5px;color:#555;font-family:'Liberation Sans', sans-serif;transform:scaleY(1.07);transform-origin:0 21.68px">310</div><div class="t" style="left:327.0px;top:441.0px;font-size:24px;font-family:'Liberation Mono', monospace;transform:scaleY(1.15);transform-origin:0 18.24px"><span style="color:#24292e">{showAxis </span><span style="color:#d73a49">&amp;&amp;</span><span style="color:#24292e"> (</span></div><div class="t" style="right:621.2px;top:473.0px;font-size:25.5px;color:#555;font-family:'Liberation Sans', sans-serif;transform:scaleY(1.07);transform-origin:0 21.68px">311</div><div class="t" style="left:355.8px;top:477.0px;font-size:24px;font-family:'Liberation Mono', monospace;transform:scaleY(1.15);transform-origin:0 18.24px"><span style="color:#24292e">&lt;&gt;</span></div><div class="abs" style="left:0;top:504px;width:693px;height:36px;background:repeating-linear-gradient(135deg,#e6e6e6 0px,#e6e6e6 2.4px,#ffffff 2.4px,#ffffff 11.4px);background-attachment:fixed"></div><div class="t" style="right:621.2px;top:545.0px;font-size:25.5px;color:#555;font-family:'Liberation Sans', sans-serif;transform:scaleY(1.07);transform-origin:0 21.68px">312</div><div class="t" style="left:384.6px;top:549.0px;font-size:24px;font-family:'Liberation Mono', monospace;transform:scaleY(1.15);transform-origin:0 18.24px"><span style="color:#24292e">&lt;</span><span style="color:#005cc5">AxisLeft</span></div><div class="t" style="right:621.2px;top:581.0px;font-size:25.5px;color:#555;font-family:'Liberation Sans', sans-serif;transform:scaleY(1.07);transform-origin:0 21.68px">313</div><div class="t" style="left:413.4px;top:585.0px;font-size:24px;font-family:'Liberation Mono', monospace;transform:scaleY(1.15);transform-origin:0 18.24px"><span style="color:#6f42c1">scale</span><span style="color:#d73a49">=</span><span style="color:#24292e">{valueScale}</span></div><div class="t" style="right:621.2px;top:617.0px;font-size:25.5px;color:#555;font-family:'Liberation Sans', sans-serif;transform:scaleY(1.07);transform-origin:0 21.68px">314</div><div class="t" style="left:413.4px;top:621.0px;font-size:24px;font-family:'Liberation Mono', monospace;transform:scaleY(1.15);transform-origin:0 18.24px"><span style="color:#6f42c1">left</span><span style="color:#d73a49">=</span><span style="color:#24292e">{margin.left}</span></div><div class="abs" style="left:0;top:648px;width:693px;height:36px;background:#d2f5e6"></div><div class="abs" style="left:0;top:648px;width:86px;height:36px;background:#c3eedb"></div><div class="abs" style="left:528.6px;top:651.5px;width:158.4px;height:29px;background:#b3e4cf;border-radius:5px"></div><div class="t" style="right:621.2px;top:653.0px;font-size:25.5px;color:#2f7d55;font-family:'Liberation Sans', sans-serif;transform:scaleY(1.07);transform-origin:0 21.68px">315</div><div class="abs" style="left:131px;top:667.4px;width:13.6px;height:2.1px;background:#2f7d55"></div><div class="abs" style="left:136.8px;top:661.6px;width:2.1px;height:13.7px;background:#2f7d55"></div><div class="t" style="left:413.4px;top:657.0px;font-size:24px;font-family:'Liberation Mono', monospace;transform:scaleY(1.15);transform-origin:0 18.24px"><span style="color:#6f42c1">stroke</span><span style="color:#d73a49">=</span><span style="color:#032f62">"transparent"</span></div><div class="abs" style="left:0;top:684px;width:693px;height:36px;background:#d2f5e6"></div><div class="abs" style="left:0;top:684px;width:86px;height:36px;background:#c3eedb"></div><div class="abs" style="left:586.2px;top:687.5px;width:576.0px;height:29px;background:#b3e4cf;border-radius:5px"></div><div class="t" style="right:621.2px;top:689.0px;font-size:25.5px;color:#2f7d55;font-family:'Liberation Sans', sans-serif;transform:scaleY(1.07);transform-origin:0 21.68px">316</div><div class="abs" style="left:131px;top:703.4px;width:13.6px;height:2.1px;background:#2f7d55"></div><div class="abs" style="left:136.8px;top:697.6px;width:2.1px;height:13.7px;background:#2f7d55"></div><div class="t" style="left:413.4px;top:693.0px;font-size:24px;font-family:'Liberation Mono', monospace;transform:scaleY(1.15);transform-origin:0 18.24px"><span style="color:#6f42c1">tickStroke</span><span style="color:#d73a49">=</span><span style="color:#032f62">"transparent"</span></div><div class="t" style="right:621.2px;top:725.0px;font-size:25.5px;color:#555;font-family:'Liberation Sans', sans-serif;transform:scaleY(1.07);transform-origin:0 21.68px">317</div><div class="t" style="left:413.4px;top:729.0px;font-size:24px;font-family:'Liberation Mono', monospace;transform:scaleY(1.15);transform-origin:0 18.24px"><span style="color:#6f42c1">tickLabelProps</span><span style="color:#d73a49">=</span><span style="color:#24292e">{{</span></div><div class="t" style="right:621.2px;top:761.0px;font-size:25.5px;color:#555;font-family:'Liberation Sans', sans-serif;transform:scaleY(1.07);transform-origin:0 21.68px">318</div><div class="t" style="left:442.2px;top:765.0px;font-size:24px;font-family:'Liberation Mono', monospace;transform:scaleY(1.15);transform-origin:0 18.24px"><span style="color:#24292e">fill: </span><span style="color:#032f62">'hsl(var(--muted-foreground))'</span><span style="color:#24292e">,</span></div><div class="t" style="right:621.2px;top:797.0px;font-size:25.5px;color:#555;font-family:'Liberation Sans', sans-serif;transform:scaleY(1.07);transform-origin:0 21.68px">319</div><div class="t" style="left:442.2px;top:801.0px;font-size:24px;font-family:'Liberation Mono', monospace;transform:scaleY(1.15);transform-origin:0 18.24px"><span style="color:#24292e">fontSize: </span><span style="color:#005cc5">11</span><span style="color:#24292e">,</span></div><div class="t" style="right:621.2px;top:833.0px;font-size:25.5px;color:#555;font-family:'Liberation Sans', sans-serif;transform:scaleY(1.07);transform-origin:0 21.68px">320</div><div class="t" style="left:442.2px;top:837.0px;font-size:24px;font-family:'Liberation Mono', monospace;transform:scaleY(1.15);transform-origin:0 18.24px"><span style="color:#24292e">textAnchor: </span><span style="color:#032f62">'end'</span><span style="color:#24292e">,</span></div><div class="t" style="right:621.2px;top:869.0px;font-size:25.5px;color:#555;font-family:'Liberation Sans', sans-serif;transform:scaleY(1.07);transform-origin:0 21.68px">321</div><div class="t" style="left:442.2px;top:873.0px;font-size:24px;font-family:'Liberation Mono', monospace;transform:scaleY(1.15);transform-origin:0 18.24px"><span style="color:#24292e">dy: </span><span style="color:#032f62">'0.33em'</span><span style="color:#24292e">,</span></div><div class="abs" style="left:0;top:900px;width:693px;height:36px;background:#d2f5e6"></div><div class="abs" style="left:0;top:900px;width:86px;height:36px;background:#c3eedb"></div><div class="abs" style="left:514.2px;top:903.5px;width:14.4px;height:29px;background:#b3e4cf;border-radius:5px"></div><div class="t" style="right:621.2px;top:905.0px;font-size:25.5px;color:#2f7d55;font-family:'Liberation Sans', sans-serif;transform:scaleY(1.07);transform-origin:0 21.68px">322</div><div class="abs" style="left:131px;top:919.4px;width:13.6px;height:2.1px;background:#2f7d55"></div><div class="abs" style="left:136.8px;top:913.6px;width:2.1px;height:13.7px;background:#2f7d55"></div><div class="t" style="left:442.2px;top:909.0px;font-size:24px;font-family:'Liberation Mono', monospace;transform:scaleY(1.15);transform-origin:0 18.24px"><span style="color:#24292e">dx: </span><span style="color:#d73a49">-</span><span style="color:#005cc5">8</span><span style="color:#24292e">,</span></div><div class="t" style="right:621.2px;top:941.0px;font-size:25.5px;color:#555;font-family:'Liberation Sans', sans-serif;transform:scaleY(1.07);transform-origin:0 21.68px">323</div><div class="t" style="left:413.4px;top:945.0px;font-size:24px;font-family:'Liberation Mono', monospace;transform:scaleY(1.15);transform-origin:0 18.24px"><span style="color:#24292e">}}</span></div><div class="t" style="right:621.2px;top:977.0px;font-size:25.5px;color:#555;font-family:'Liberation Sans', sans-serif;transform:scaleY(1.07);transform-origin:0 21.68px">324</div><div class="t" style="left:413.4px;top:981.0px;font-size:24px;font-family:'Liberation Mono', monospace;transform:scaleY(1.15);transform-origin:0 18.24px"><span style="color:#6f42c1">tickFormat</span><span style="color:#d73a49">=</span><span style="color:#24292e">{(</span><span style="color:#e36209">value</span><span style="color:#24292e">) =&gt; formatValue(value)}</span></div><div class="abs" style="left:0;top:1008px;width:693px;height:36px;background:#d2f5e6"></div><div class="abs" style="left:0;top:1008px;width:86px;height:36px;background:#c3eedb"></div><div class="t" style="right:621.2px;top:1013.0px;font-size:25.5px;color:#2f7d55;font-family:'Liberation Sans', sans-serif;transform:scaleY(1.07);transform-origin:0 21.68px">325</div><div class="abs" style="left:131px;top:1027.4px;width:13.6px;height:2.1px;background:#2f7d55"></div><div class="abs" style="left:136.8px;top:1021.6px;width:2.1px;height:13.7px;background:#2f7d55"></div><div class="t" style="left:413.4px;top:1017.0px;font-size:24px;font-family:'Liberation Mono', monospace;transform:scaleY(1.15);transform-origin:0 18.24px"><span style="color:#6f42c1">numTicks</span><span style="color:#d73a49">=</span><span style="color:#24292e">{</span><span style="color:#005cc5">5</span><span style="color:#24292e">}</span></div><div class="t" style="right:621.2px;top:1049.0px;font-size:25.5px;color:#555;font-family:'Liberation Sans', sans-serif;transform:scaleY(1.07);transform-origin:0 21.68px">326</div><div class="t" style="left:384.6px;top:1053.0px;font-size:24px;font-family:'Liberation Mono', monospace;transform:scaleY(1.15);transform-origin:0 18.24px"><span style="color:#24292e">/&gt;</span></div><div class="t" style="right:621.2px;top:1085.0px;font-size:25.5px;color:#555;font-family:'Liberation Sans', sans-serif;transform:scaleY(1.07);transform-origin:0 21.68px">327</div><div class="abs" style="left:0;top:1116px;width:693px;height:36px;background:repeating-linear-gradient(135deg,#e6e6e6 0px,#e6e6e6 2.4px,#ffffff 2.4px,#ffffff 11.4px);background-attachment:fixed"></div><div class="t" style="right:621.2px;top:1157.0px;font-size:25.5px;color:#555;font-family:'Liberation Sans', sans-serif;transform:scaleY(1.07);transform-origin:0 21.68px">328</div><div class="t" style="left:384.6px;top:1161.0px;font-size:24px;font-family:'Liberation Mono', monospace;transform:scaleY(1.15);transform-origin:0 18.24px"><span style="color:#24292e">&lt;</span><span style="color:#005cc5">AxisBottom</span></div><div class="t" style="right:621.2px;top:1193.0px;font-size:25.5px;color:#555;font-family:'Liberation Sans', sans-serif;transform:scaleY(1.07);transform-origin:0 21.68px">329</div><div class="t" style="left:413.4px;top:1197.0px;font-size:24px;font-family:'Liberation Mono', monospace;transform:scaleY(1.15);transform-origin:0 18.24px"><span style="color:#6f42c1">scale</span><span style="color:#d73a49">=</span><span style="color:#24292e">{dateScale}</span></div><div class="t" style="right:621.2px;top:1229.0px;font-size:25.5px;color:#555;font-family:'Liberation Sans', sans-serif;transform:scaleY(1.07);transform-origin:0 21.68px">330</div><div class="t" style="left:413.4px;top:1233.0px;font-size:24px;font-family:'Liberation Mono', monospace;transform:scaleY(1.15);transform-origin:0 18.24px"><span style="color:#6f42c1">top</span><span style="color:#d73a49">=</span><span style="color:#24292e">{innerHeight </span><span style="color:#d73a49">+</span><span style="color:#24292e"> margin.top}</span></div><div class="abs" style="left:0;top:1260px;width:693px;height:36px;background:#d2f5e6"></div><div class="abs" style="left:0;top:1260px;width:86px;height:36px;background:#c3eedb"></div><div class="abs" style="left:528.6px;top:1263.5px;width:158.4px;height:29px;background:#b3e4cf;border-radius:5px"></div><div class="t" style="right:621.2px;top:1265.0px;font-size:25.5px;color:#2f7d55;font-family:'Liberation Sans', sans-serif;transform:scaleY(1.07);transform-origin:0 21.68px">331</div><div class="abs" style="left:131px;top:1279.4px;width:13.6px;height:2.1px;background:#2f7d55"></div><div class="abs" style="left:136.8px;top:1273.6px;width:2.1px;height:13.7px;background:#2f7d55"></div><div class="t" style="left:413.4px;top:1269.0px;font-size:24px;font-family:'Liberation Mono', monospace;transform:scaleY(1.15);transform-origin:0 18.24px"><span style="color:#6f42c1">stroke</span><span style="color:#d73a49">=</span><span style="color:#032f62">"transparent"</span></div><div class="abs" style="left:0;top:1296px;width:693px;height:36px;background:#d2f5e6"></div><div class="abs" style="left:0;top:1296px;width:86px;height:36px;background:#c3eedb"></div><div class="abs" style="left:586.2px;top:1299.5px;width:576.0px;height:29px;background:#b3e4cf;border-radius:5px"></div><div class="t" style="right:621.2px;top:1301.0px;font-size:25.5px;color:#2f7d55;font-family:'Liberation Sans', sans-serif;transform:scaleY(1.07);transform-origin:0 21.68px">332</div><div class="abs" style="left:131px;top:1315.4px;width:13.6px;height:2.1px;background:#2f7d55"></div><div class="abs" style="left:136.8px;top:1309.6px;width:2.1px;height:13.7px;background:#2f7d55"></div><div class="t" style="left:413.4px;top:1305.0px;font-size:24px;font-family:'Liberation Mono', monospace;transform:scaleY(1.15);transform-origin:0 18.24px"><span style="color:#6f42c1">tickStroke</span><span style="color:#d73a49">=</span><span style="color:#032f62">"transparent"</span></div><div class="t" style="right:621.2px;top:1337.0px;font-size:25.5px;color:#555;font-family:'Liberation Sans', sans-serif;transform:scaleY(1.07);transform-origin:0 21.68px">333</div><div class="t" style="left:413.4px;top:1341.0px;font-size:24px;font-family:'Liberation Mono', monospace;transform:scaleY(1.15);transform-origin:0 18.24px"><span style="color:#6f42c1">tickLabelProps</span><span style="color:#d73a49">=</span><span style="color:#24292e">{{</span></div><div class="t" style="right:621.2px;top:1373.0px;font-size:25.5px;color:#555;font-family:'Liberation Sans', sans-serif;transform:scaleY(1.07);transform-origin:0 21.68px">334</div><div class="t" style="left:442.2px;top:1377.0px;font-size:24px;font-family:'Liberation Mono', monospace;transform:scaleY(1.15);transform-origin:0 18.24px"><span style="color:#24292e">fill: </span><span style="color:#032f62">'hsl(var(--muted-foreground))'</span><span style="color:#24292e">,</span></div><div class="t" style="right:621.2px;top:1409.0px;font-size:25.5px;color:#555;font-family:'Liberation Sans', sans-serif;transform:scaleY(1.07);transform-origin:0 21.68px">335</div><div class="t" style="left:442.2px;top:1413.0px;font-size:24px;font-family:'Liberation Mono', monospace;transform:scaleY(1.15);transform-origin:0 18.24px"><span style="color:#24292e">fontSize: </span><span style="color:#005cc5">11</span><span style="color:#24292e">,</span></div><div class="t" style="right:621.2px;top:1445.0px;font-size:25.5px;color:#555;font-family:'Liberation Sans', sans-serif;transform:scaleY(1.07);transform-origin:0 21.68px">336</div><div class="t" style="left:442.2px;top:1449.0px;font-size:24px;font-family:'Liberation Mono', monospace;transform:scaleY(1.15);transform-origin:0 18.24px"><span style="color:#24292e">textAnchor: </span><span style="color:#032f62">'middle'</span><span style="color:#24292e">,</span></div><div class="abs" style="left:0;top:1476px;width:693px;height:36px;background:#d2f5e6"></div><div class="abs" style="left:0;top:1476px;width:86px;height:36px;background:#c3eedb"></div><div class="abs" style="left:499.8px;top:1479.5px;width:14.4px;height:29px;background:#b3e4cf;border-radius:5px"></div><div class="t" style="right:621.2px;top:1481.0px;font-size:25.5px;color:#2f7d55;font-family:'Liberation Sans', sans-serif;transform:scaleY(1.07);transform-origin:0 21.68px">337</div><div class="abs" style="left:131px;top:1495.4px;width:13.6px;height:2.1px;background:#2f7d55"></div><div class="abs" style="left:136.8px;top:1489.6px;width:2.1px;height:13.7px;background:#2f7d55"></div><div class="t" style="left:442.2px;top:1485.0px;font-size:24px;font-family:'Liberation Mono', monospace;transform:scaleY(1.15);transform-origin:0 18.24px"><span style="color:#24292e">dy: </span><span style="color:#005cc5">4</span><span style="color:#24292e">,</span></div><div class="t" style="right:621.2px;top:1517.0px;font-size:25.5px;color:#555;font-family:'Liberation Sans', sans-serif;transform:scaleY(1.07);transform-origin:0 21.68px">338</div><div class="t" style="left:413.4px;top:1521.0px;font-size:24px;font-family:'Liberation Mono', monospace;transform:scaleY(1.15);transform-origin:0 18.24px"><span style="color:#24292e">}}</span></div></div></div><div class="abs" style="left:0.0px;top:0.0px;width:106.0px;height:1696.0px;background:#f3f3f3;"></div><div class="abs" style="left:106.0px;top:0.0px;width:2.0px;height:1696.0px;background:#d6d6d6;"></div><div class="abs" style="left:10.0px;top:10.0px;width:80.0px;height:80.0px;background:#f1dccd;border-radius:12px"></div><svg class="abs" style="left:33.2px;top:35.1px;" width="34" height="30" viewBox="0 0 34 30" fill="none" stroke-linecap="round" stroke-linejoin="round"><g stroke="#d97a3a" stroke-width="3.3"><rect x="1.7" y="1.7" width="30.3" height="25.8" rx="3"/><path d="M1.7 10.8 H32"/><path d="M12.7 10.8 V27.5"/></g></svg><div class="abs" style="left:10.0px;top:106.0px;width:80.0px;height:80.0px;background:#ffffff;border-radius:12px"></div><svg class="abs" style="left:34.6px;top:133.0px;" width="31" height="28" viewBox="0 0 31 28" fill="none" stroke-linecap="round" stroke-linejoin="round"><g stroke="#333" stroke-width="3"><path d="M1.6 1.4 H28.9 V21.3 H20 V16.4 H10 V26.5 H1.6 Z"/><path d="M10 1.4 V26.5"/><path d="M20 1.4 V21.3"/><path d="M1.6 11.6 H10"/><path d="M20 11.6 H28.9"/></g></svg><div class="abs" style="left:10.0px;top:1396.0px;width:80.0px;height:79.5px;background:#e3e3e3;border-radius:12px"></div><svg class="abs" style="left:35.0px;top:1420.0px;" width="31" height="31" viewBox="0 0 31 31" fill="none" stroke-linecap="round" stroke-linejoin="round"><g stroke="#333" stroke-width="3"><circle cx="15.5" cy="9.5" r="7.5"/><path d="M2 29 C4 22 9 19.5 15.5 19.5 C22 19.5 27 22 29 29"/></g></svg><div class="abs" style="left:10.0px;top:1508.0px;width:80.0px;height:79.6px;background:#e3e3e3;border-radius:12px"></div><svg class="abs" style="left:30.0px;top:1528.0px;" width="40" height="40" viewBox="0 0 16 16" fill="none" stroke-linecap="round" stroke-linejoin="round"><path fill="#333" d="M8 0C3.58 0 0 3.58 0 8c0 3.54 2.29 6.53 5.47 7.59.4.07.55-.17.55-.38 0-.19-.01-.82-.01-1.49-2.01.37-2.53-.49-2.69-.94-.09-.23-.48-.94-.82-1.13-.28-.15-.68-.52-.01-.53.63-.01 1.08.58 1.23.82.72 1.21 1.87.87 2.33.66.07-.52.28-.87.51-1.07-1.78-.2-3.64-.89-3.64-3.95 0-.87.31-1.59.82-2.15-.08-.2-.36-1.02.08-2.12 0 0 .67-.21 2.2.82.64-.18 1.32-.27 2-.27.68 0 1.36.09 2 .27 1.53-1.04 2.2-.82 2.2-.82.44 1.1.16 1.92.08 2.12.51.56.82 1.27.82 2.15 0 3.07-1.87 3.75-3.65 3.95.29.25.54.73.54 1.48 0 1.07-.01 1.93-.01 2.2 0 .21.15.46.55.38A8.013 8.013 0 0016 8c0-4.42-3.58-8-8-8z"/></svg><div class="abs" style="left:22.8px;top:1492.0px;width:74.8px;height:35.5px;background:#a0541f;border-radius:18px"></div><svg class="abs" style="left:31.0px;top:1500.5px;" width="19" height="18" viewBox="0 0 24 23" fill="none" stroke-linecap="round" stroke-linejoin="round"><path fill="#fff" d="M12 1 L15.1 7.6 L22.5 8.5 L17 13.5 L18.5 20.8 L12 17.2 L5.5 20.8 L7 13.5 L1.5 8.5 L8.9 7.6 Z"/></svg><div class="t" style="left:55.0px;top:1501.2px;font-size:21.5px;color:#fff;font-weight:700;font-family:'Liberation Sans', sans-serif;">22k</div><div class="abs" style="left:10.0px;top:1619.7px;width:80.0px;height:100.3px;background:#e3e3e3;border-radius:12px"></div><svg class="abs" style="left:30.0px;top:1644.0px;" width="40" height="32" viewBox="0 0 127.14 96.36" fill="none" stroke-linecap="round" stroke-linejoin="round"><path fill="#333" d="M107.7,8.07A105.15,105.15,0,0,0,81.47,0a72.06,72.06,0,0,0-3.36,6.83A97.68,97.68,0,0,0,49,6.83,72.37,72.37,0,0,0,45.64,0,105.89,105.89,0,0,0,19.39,8.09C2.79,32.65-1.71,56.6.54,80.21h0A105.73,105.73,0,0,0,32.71,96.36,77.7,77.7,0,0,0,39.6,85.25a68.42,68.42,0,0,1-10.85-5.18c.91-.66,1.8-1.34,2.66-2a75.57,75.57,0,0,0,64.32,0c.87.71,1.76,1.39,2.66,2a68.68,68.68,0,0,1-10.87,5.19,77,77,0,0,0,6.89,11.1A105.25,105.25,0,0,0,126.6,80.22h0C129.24,52.84,122.09,29.11,107.7,8.07ZM42.45,65.69C36.18,65.69,31,60,31,53s5-12.74,11.43-12.74S54,46,53.89,53,48.84,65.69,42.45,65.69Zm42.24,0C78.41,65.69,73.25,60,73.25,53s5-12.74,11.44-12.74S96.23,46,96.12,53,91.08,65.69,84.69,65.69Z"/></svg><div class="abs" style="left:46.0px;top:1604.0px;width:51.6px;height:35.3px;background:#a0541f;border-radius:18px"></div><div class="t" style="left:54.5px;top:1612.8px;font-size:22px;color:#fff;font-weight:700;font-family:'Liberation Sans', sans-serif;">346</div><div class="abs" style="left:108.0px;top:0.0px;width:2882.0px;height:58.0px;background:#f2f2f2;"></div><div class="abs" style="left:108.0px;top:58.0px;width:2882.0px;height:2.0px;background:#d6d6d6;"></div><svg class="abs" style="left:126.0px;top:13.0px;" width="36" height="26" viewBox="0 0 36 26" fill="none" stroke-linecap="round" stroke-linejoin="round"><g stroke="#555" stroke-width="2.6"><rect x="1.5" y="1.5" width="33" height="7" rx="1.5"/><path d="M4 8.5 V23 a1.5 1.5 0 0 0 1.5 1.5 H30.5 a1.5 1.5 0 0 0 1.5 -1.5 V8.5"/><path d="M14 14.5 H22"/></g></svg><div class="t" style="left:1362.5px;top:9.0px;font-size:33.5px;color:#666;font-weight:400;font-family:'Liberation Sans', sans-serif;">vk/4e2a-explore-the-code</div><div class="abs" style="left:2297.5px;top:11.0px;width:11.2px;height:30.0px;background:#333;border-radius:2.5px"></div><div class="abs" style="left:2311.6px;top:11.0px;width:10.8px;height:30.0px;background:#333;border-radius:2.5px"></div><svg class="abs" style="left:2352.0px;top:11.0px;" width="28" height="27" viewBox="0 0 28 27" fill="none" stroke-linecap="round" stroke-linejoin="round"><g stroke="#666" stroke-width="2.5"><path d="M1.5 13.5 L14 1.5 L26.5 13.5"/><path d="M1.5 25.5 L14 13.5 L26.5 25.5"/></g></svg><div class="abs" style="left:2402.0px;top:10.0px;width:2.0px;height:31.5px;background:#d3d3d3;"></div><svg class="abs" style="left:2424.0px;top:12.0px;" width="33" height="28" viewBox="0 0 33 28" fill="none" stroke-linecap="round" stroke-linejoin="round"><g stroke="#666" stroke-width="2.5"><rect x="1.3" y="1.3" width="30.4" height="25.4" rx="2"/><path d="M10.5 1.3 V26.7"/></g></svg><svg class="abs" style="left:2477.0px;top:9.0px;" width="37" height="34" viewBox="0 0 37 34" fill="none" stroke-linecap="round" stroke-linejoin="round"><circle cx="13" cy="12.5" r="12" fill="#333"/><rect x="1" y="12.5" width="12" height="12" fill="#333"/><path d="M24.5 8.5 A12 12 0 0 1 35.5 21 V32 H24.5 A12 12 0 0 1 13.5 24.5" stroke="#333" stroke-width="2.6"/></svg><svg class="abs" style="left:2530.0px;top:5.0px;" width="40" height="40" viewBox="0 0 40 40" fill="none" stroke-linecap="round" stroke-linejoin="round"><g stroke="#333" stroke-width="2.8"><circle cx="10.8" cy="10.9" r="4.6" fill="#333"/><path d="M10.8 11 V23.7 L20 33"/><path d="M11.7 33 H20 V25"/><circle cx="33.2" cy="30.8" r="4.6" fill="#333"/><path d="M33.2 30.8 V17.4 L24.2 7.8"/><path d="M32.6 7.8 H24.2 V16.2"/></g></svg><svg class="abs" style="left:2592.0px;top:14.0px;" width="32" height="24" viewBox="0 0 32 24" fill="none" stroke-linecap="round" stroke-linejoin="round"><g stroke="#666" stroke-width="2.5"><path d="M1.5 1.5 L12 11.5 L1.5 21.5"/><path d="M17 21.5 H30.5"/></g></svg><svg class="abs" style="left:2648.0px;top:12.0px;" width="33" height="31" viewBox="0 0 33 31" fill="none" stroke-linecap="round" stroke-linejoin="round"><g stroke="#666" stroke-width="2.5"><rect x="1.3" y="1.3" width="30.4" height="22" rx="3"/><path d="M1.3 16.5 H31.7"/><path d="M16.5 23.3 V29"/><path d="M10.5 29.5 H22.5"/></g></svg><svg class="abs" style="left:2704.0px;top:12.0px;" width="33" height="29" viewBox="0 0 33 29" fill="none" stroke-linecap="round" stroke-linejoin="round"><rect x="1.5" y="1.5" width="30" height="26" rx="2.5" stroke="#333" stroke-width="2.6"/><rect x="22.5" y="1.5" width="9" height="26" fill="#333"/></svg><div class="abs" style="left:2756.0px;top:10.0px;width:2.0px;height:31.5px;background:#d3d3d3;"></div><svg class="abs" style="left:2779.0px;top:15.0px;" width="30" height="23" viewBox="0 0 30 23" fill="none" stroke-linecap="round" stroke-linejoin="round"><g stroke="#666" stroke-width="2.5"><path d="M1.3 1.5 H28.7"/><path d="M1.3 11 H28.7"/><path d="M1.3 21 H28.7"/></g></svg><svg class="abs" style="left:2835.0px;top:10.0px;" width="34" height="31" viewBox="0 0 34 31" fill="none" stroke-linecap="round" stroke-linejoin="round"><g stroke="#666" stroke-width="2.5"><path d="M1.5 2 L1.5 27 C7 23 13 20 18.5 20 V8 C13 8 7 6 1.5 2 Z"/><path d="M18.5 8 H24 a6 6 0 0 1 0 12 H18.5"/><path d="M19.5 20 L20.5 27.5 a2.5 2.5 0 0 0 5 -0.5 L26.5 20"/></g></svg><svg class="abs" style="left:2890.0px;top:10.0px;" width="32" height="32" viewBox="0 0 32 32" fill="none" stroke-linecap="round" stroke-linejoin="round"><g stroke="#666" stroke-width="2.5"><circle cx="16" cy="16" r="14.7"/><path d="M11.5 12 a4.7 4.7 0 0 1 9.2 1.3 c0 3-4.7 4.3-4.7 4.3"/><path d="M16 22.8 h0.02" stroke-width="3.2"/></g></svg><svg class="abs" style="left:2942.0px;top:5.7px;" width="40" height="40" viewBox="0 0 40 40" fill="none" stroke-linecap="round" stroke-linejoin="round"><g stroke="#555" stroke-width="2.4" stroke-linejoin="round"><path d="M21.04 9.15 L23.44 6.22 L27.31 7.83 L26.93 11.59 L28.41 13.07 L32.17 12.69 L33.78 16.56 L30.85 18.96 L30.85 21.04 L33.78 23.44 L32.17 27.31 L28.41 26.93 L26.93 28.41 L27.31 32.17 L23.44 33.78 L21.04 30.85 L18.96 30.85 L16.56 33.78 L12.69 32.17 L13.07 28.41 L11.59 26.93 L7.83 27.31 L6.22 23.44 L9.15 21.04 L9.15 18.96 L6.22 16.56 L7.83 12.69 L11.59 13.07 L13.07 11.59 L12.69 7.83 L16.56 6.22 L18.96 9.15 Z"/><circle cx="20" cy="20" r="6.3"/></g></svg><div class="abs" style="left:2382.0px;top:60.0px;width:16.0px;height:1636.0px;background:#f2f2f2;"></div><div class="abs" style="left:2398.0px;top:60.0px;width:2.0px;height:1636.0px;background:#d6d6d6;"></div><div class="abs" style="left:2400.0px;top:60.0px;width:590.0px;height:1636.0px;background:#f2f2f2;"></div><div class="t" style="left:2417.0px;top:78.7px;font-size:29.5px;color:#2b2b2b;font-weight:700;font-family:'Liberation Sans', sans-serif;">Changes</div><svg class="abs" style="left:2956.0px;top:86.0px;" width="20" height="12" viewBox="0 0 20 12" fill="none" stroke-linecap="round" stroke-linejoin="round"><path d="M0 0 H20 L10.0 12 Z" fill="#555"/></svg><div class="abs" style="left:2400.0px;top:124.0px;width:590.0px;height:2.0px;background:#d6d6d6;"></div><div class="abs" style="left:2417.0px;top:142.5px;width:505.5px;height:60.5px;background:#f2f2f2;border:2px solid #d9d9d9;border-radius:6px"></div><div class="t" style="left:2434.5px;top:158.6px;font-size:27.5px;color:#8a8a8a;font-weight:400;font-family:'Liberation Sans', sans-serif;">Search files...</div><svg class="abs" style="left:2874.0px;top:160.0px;" width="27" height="27" viewBox="0 0 27 27" fill="none" stroke-linecap="round" stroke-linejoin="round"><g stroke="#555" stroke-width="2.6"><path d="M25.5 1.5 L16 11"/><path d="M16 3.5 V11 H23.5"/><path d="M1.5 25.5 L11 16"/><path d="M3.5 16 H11 V23.5"/></g></svg><svg class="abs" style="left:2936.0px;top:155.0px;" width="40" height="36" viewBox="0 0 40 36" fill="none" stroke-linecap="round" stroke-linejoin="round"><path fill="#333" d="M13.1 4.7 C11.6 7 11.4 9.6 11.7 11.4 C10.8 12.8 11 14.5 11.4 15.8 C12.1 19.8 15.3 23 21.9 23 C28.5 23 31.7 19.8 32.4 15.8 C32.8 14.5 33 12.8 32.1 11.4 C32.4 9.6 32.2 7 30.6 4.7 C28.1 5 25.5 6.7 24.6 8.5 C22.8 8.2 21 8.2 19.2 8.5 C18.3 6.7 15.6 5 13.1 4.7 Z"/><rect x="16.2" y="20" width="10.6" height="13.5" rx="1.5" fill="#333"/><path d="M3.5 20.4 C6.5 20.5 8.8 22.5 9.6 25 C10.3 27.7 12.2 28.5 14.5 28.5 H17" stroke="#333" stroke-width="2.2"/></svg><div class="abs" style="left:2416.0px;top:480.0px;width:566.0px;height:52.0px;background:#e3e3e3;border-radius:10px"></div><div class="abs" style="left:2439.0px;top:272.0px;width:2.0px;height:468.0px;background:#d2d2d2;"></div><div class="abs" style="left:2463.0px;top:324.0px;width:2.0px;height:364.0px;background:#d2d2d2;"></div><div class="abs" style="left:2487.0px;top:376.0px;width:2.0px;height:260.0px;background:#d2d2d2;"></div><div class="abs" style="left:2511.0px;top:428.0px;width:2.0px;height:104.0px;background:#d2d2d2;"></div><div class="abs" style="left:2511.0px;top:584.0px;width:2.0px;height:52.0px;background:#d2d2d2;"></div><div class="abs" style="left:2535.0px;top:480.0px;width:2.0px;height:52.0px;background:#d2d2d2;"></div><svg class="abs" style="left:2432.0px;top:242.0px;" width="16" height="9.5" viewBox="0 0 16 9.5" fill="none" stroke-linecap="round" stroke-linejoin="round"><path d="M0 0 H16 L8.0 9.5 Z" fill="#555"/></svg><svg class="abs" style="left:2463.0px;top:235.0px;" width="29" height="24" viewBox="0 0 29 24" fill="none" stroke-linecap="round" stroke-linejoin="round"><path fill="#666" d="M0 3 a2 2 0 0 1 2-2 H10 L13 4 H27 a2 2 0 0 1 2 2 V22 a2 2 0 0 1 -2 2 H2 a2 2 0 0 1 -2-2 Z"/></svg><div class="t" style="left:2503.5px;top:231.6px;font-size:28px;color:#666;font-weight:400;font-family:'Liberation Sans', sans-serif;">churnguard</div><svg class="abs" style="left:2456.0px;top:294.0px;" width="16" height="9.5" viewBox="0 0 16 9.5" fill="none" stroke-linecap="round" stroke-linejoin="round"><path d="M0 0 H16 L8.0 9.5 Z" fill="#555"/></svg><svg class="abs" style="left:2487.0px;top:287.0px;" width="29" height="24" viewBox="0 0 29 24" fill="none" stroke-linecap="round" stroke-linejoin="round"><path fill="#666" d="M0 3 a2 2 0 0 1 2-2 H10 L13 4 H27 a2 2 0 0 1 2 2 V22 a2 2 0 0 1 -2 2 H2 a2 2 0 0 1 -2-2 Z"/></svg><div class="t" style="left:2527.5px;top:283.6px;font-size:28px;color:#666;font-weight:400;font-family:'Liberation Sans', sans-serif;">frontend</div><svg class="abs" style="left:2480.0px;top:346.0px;" width="16" height="9.5" viewBox="0 0 16 9.5" fill="none" stroke-linecap="round" stroke-linejoin="round"><path d="M0 0 H16 L8.0 9.5 Z" fill="#555"/></svg><svg class="abs" style="left:2511.0px;top:339.0px;" width="29" height="24" viewBox="0 0 29 24" fill="none" stroke-linecap="round" stroke-linejoin="round"><path fill="#666" d="M0 3 a2 2 0 0 1 2-2 H10 L13 4 H27 a2 2 0 0 1 2 2 V22 a2 2 0 0 1 -2 2 H2 a2 2 0 0 1 -2-2 Z"/></svg><div class="t" style="left:2551.5px;top:335.6px;font-size:28px;color:#666;font-weight:400;font-family:'Liberation Sans', sans-serif;">src</div><svg class="abs" style="left:2504.0px;top:398.0px;" width="16" height="9.5" viewBox="0 0 16 9.5" fill="none" stroke-linecap="round" stroke-linejoin="round"><path d="M0 0 H16 L8.0 9.5 Z" fill="#555"/></svg><svg class="abs" style="left:2535.0px;top:391.0px;" width="29" height="24" viewBox="0 0 29 24" fill="none" stroke-linecap="round" stroke-linejoin="round"><path fill="#666" d="M0 3 a2 2 0 0 1 2-2 H10 L13 4 H27 a2 2 0 0 1 2 2 V22 a2 2 0 0 1 -2 2 H2 a2 2 0 0 1 -2-2 Z"/></svg><div class="t" style="left:2575.5px;top:387.6px;font-size:28px;color:#666;font-weight:400;font-family:'Liberation Sans', sans-serif;">components</div><svg class="abs" style="left:2528.0px;top:450.0px;" width="16" height="9.5" viewBox="0 0 16 9.5" fill="none" stroke-linecap="round" stroke-linejoin="round"><path d="M0 0 H16 L8.0 9.5 Z" fill="#555"/></svg><svg class="abs" style="left:2559.0px;top:443.0px;" width="29" height="24" viewBox="0 0 29 24" fill="none" stroke-linecap="round" stroke-linejoin="round"><path fill="#666" d="M0 3 a2 2 0 0 1 2-2 H10 L13 4 H27 a2 2 0 0 1 2 2 V22 a2 2 0 0 1 -2 2 H2 a2 2 0 0 1 -2-2 Z"/></svg><div class="t" style="left:2599.5px;top:439.6px;font-size:28px;color:#666;font-weight:400;font-family:'Liberation Sans', sans-serif;">dashboard</div><div class="abs" style="left:2580.0px;top:492.0px;width:28.0px;height:28.0px;background:#3178c6;"><div class="t" style="left:4.48px;top:7.07px;font-size:18.69px;font-weight:700;color:#fff;letter-spacing:-0.70px;line-height:1;transform:scaleX(0.88);transform-origin:0 0">TS</div></div><div class="t" style="left:2617.0px;top:491.6px;font-size:28px;color:#2b2b2b;font-weight:400;font-family:'Liberation Sans', sans-serif;">MultiLineArea.tsx</div><svg class="abs" style="left:2504.0px;top:554.0px;" width="16" height="9.5" viewBox="0 0 16 9.5" fill="none" stroke-linecap="round" stroke-linejoin="round"><path d="M0 0 H16 L8.0 9.5 Z" fill="#555"/></svg><svg class="abs" style="left:2535.0px;top:547.0px;" width="29" height="24" viewBox="0 0 29 24" fill="none" stroke-linecap="round" stroke-linejoin="round"><path fill="#666" d="M0 3 a2 2 0 0 1 2-2 H10 L13 4 H27 a2 2 0 0 1 2 2 V22 a2 2 0 0 1 -2 2 H2 a2 2 0 0 1 -2-2 Z"/></svg><div class="t" style="left:2575.5px;top:543.6px;font-size:28px;color:#666;font-weight:400;font-family:'Liberation Sans', sans-serif;">pages</div><div class="abs" style="left:2556.0px;top:596.0px;width:28.0px;height:28.0px;background:#3178c6;"><div class="t" style="left:4.48px;top:7.07px;font-size:18.69px;font-weight:700;color:#fff;letter-spacing:-0.70px;line-height:1;transform:scaleX(0.88);transform-origin:0 0">TS</div></div><div class="t" style="left:2593.0px;top:595.6px;font-size:28px;color:#666;font-weight:400;font-family:'Liberation Sans', sans-serif;">Dashboard.tsx</div><svg class="abs" style="left:2507.5px;top:648.0px;" width="28" height="28" viewBox="0 0 28 28" fill="none" stroke-linecap="round" stroke-linejoin="round"><defs><linearGradient id="jo8" x1="0" y1="0" x2="1" y2="1"><stop offset="0" stop-color="#111"/><stop offset="0.5" stop-color="#666"/><stop offset="1" stop-color="#0a0a0a"/></linearGradient><linearGradient id="ji8" x1="0" y1="1" x2="1" y2="0"><stop offset="0" stop-color="#aaa"/><stop offset="0.5" stop-color="#555"/><stop offset="1" stop-color="#aaa"/></linearGradient></defs><circle cx="14" cy="14" r="13.8" fill="url(#jo8)"/><ellipse cx="14" cy="14.2" rx="9" ry="10" fill="url(#ji8)"/><ellipse cx="14" cy="14" rx="4.3" ry="6.8" fill="#f2f2f2"/></svg><div class="t" style="left:2545.0px;top:647.6px;font-size:28px;color:#666;font-weight:400;font-family:'Liberation Sans', sans-serif;">package-lock.json</div><svg class="abs" style="left:2483.5px;top:700.0px;" width="28" height="28" viewBox="0 0 28 28" fill="none" stroke-linecap="round" stroke-linejoin="round"><defs><linearGradient id="jo9" x1="0" y1="0" x2="1" y2="1"><stop offset="0" stop-color="#111"/><stop offset="0.5" stop-color="#666"/><stop offset="1" stop-color="#0a0a0a"/></linearGradient><linearGradient id="ji9" x1="0" y1="1" x2="1" y2="0"><stop offset="0" stop-color="#aaa"/><stop offset="0.5" stop-color="#555"/><stop offset="1" stop-color="#aaa"/></linearGradient></defs><circle cx="14" cy="14" r="13.8" fill="url(#jo9)"/><ellipse cx="14" cy="14.2" rx="9" ry="10" fill="url(#ji9)"/><ellipse cx="14" cy="14" rx="4.3" ry="6.8" fill="#f2f2f2"/></svg><div class="t" style="left:2521.0px;top:699.6px;font-size:28px;color:#5aa55a;font-weight:400;font-family:'Liberation Sans', sans-serif;">package-lock.json</div><div class="t" style="left:2860.0px;top:491.2px;font-size:28.5px;color:#5aa55a;font-weight:400;font-family:'Liberation Sans', sans-serif;">+110</div><div class="t" style="left:2932.0px;top:491.2px;font-size:28.5px;color:#c9504a;font-weight:400;font-family:'Liberation Sans', sans-serif;">-162</div><div class="t" style="left:2798.7px;top:595.2px;font-size:28.5px;color:#5aa55a;font-weight:400;font-family:'Liberation Sans', sans-serif;">+131</div><div class="t" style="left:2872.0px;top:595.2px;font-size:28.5px;color:#c9504a;font-weight:400;font-family:'Liberation Sans', sans-serif;">-233</div><div class="t" style="left:2798.7px;top:647.2px;font-size:28.5px;color:#5aa55a;font-weight:400;font-family:'Liberation Sans', sans-serif;">+61</div><div class="t" style="left:2854.0px;top:647.2px;font-size:28.5px;color:#c9504a;font-weight:400;font-family:'Liberation Sans', sans-serif;">-104</div><div class="t" style="left:2773.4px;top:699.2px;font-size:28.5px;color:#5aa55a;font-weight:400;font-family:'Liberation Sans', sans-serif;">+6</div><div class="abs" style="left:2400.0px;top:756.0px;width:590.0px;height:2.0px;background:#d6d6d6;"></div><div class="t" style="left:2417.0px;top:776.6px;font-size:29.5px;color:#2b2b2b;font-weight:700;font-family:'Liberation Sans', sans-serif;">Git</div><svg class="abs" style="left:2956.6px;top:785.0px;" width="20" height="12" viewBox="0 0 20 12" fill="none" stroke-linecap="round" stroke-linejoin="round"><path d="M0 0 H20 L10.0 12 Z" fill="#555"/></svg><div class="abs" style="left:2400.0px;top:822.0px;width:590.0px;height:2.0px;background:#d6d6d6;"></div><div class="abs" style="left:2416.0px;top:840.0px;width:566.0px;height:233.3px;background:#ffffff;border-radius:10px"></div><div class="t" style="left:2432.8px;top:866.8px;font-size:30px;color:#666;font-weight:700;font-family:'Liberation Sans', sans-serif;">churnguard</div><div class="abs" style="left:2432.5px;top:921.4px;width:163.0px;height:61.1px;background:#f2f2f2;border:2px solid #d5d5d5;border-radius:7px"></div><svg class="abs" style="left:2454.0px;top:940.0px;" width="25" height="25" viewBox="0 0 25 25" fill="none" stroke-linecap="round" stroke-linejoin="round"><g stroke="#333" stroke-width="2.4"><circle cx="4.5" cy="4.5" r="3.2"/><circle cx="4.5" cy="20.5" r="3.2"/><circle cx="20.5" cy="4.5" r="3.2"/><path d="M4.5 7.7 V17.3"/><path d="M20.5 7.7 C20.5 13 15 14 9 14 H4.5"/></g></svg><div class="t" style="left:2489.0px;top:938.4px;font-size:29px;color:#2b2b2b;font-weight:400;font-family:'Liberation Sans', sans-serif;">main</div><svg class="abs" style="left:2560.5px;top:948.0px;" width="16" height="10" viewBox="0 0 16 10" fill="none" stroke-linecap="round" stroke-linejoin="round"><path d="M2 2 L8.0 8 L14 2" stroke="#333" stroke-width="2.3"/></svg><svg class="abs" style="left:2843.0px;top:940.0px;" width="22" height="24" viewBox="0 0 22 24" fill="none" stroke-linecap="round" stroke-linejoin="round"><g stroke="#5aa55a" stroke-width="2.6"><path d="M11 22.5 V2"/><path d="M2 11 L11 2 L20 11"/></g></svg><div class="t" style="left:2871.0px;top:938.7px;font-size:28px;color:#5aa55a;font-weight:400;font-family:'Liberation Sans', sans-serif;">1</div><div class="abs" style="left:2921.2px;top:949.7px;width:4.6px;height:4.6px;background:#555;border-radius:50%"></div><div class="abs" style="left:2931.7px;top:949.7px;width:4.6px;height:4.6px;background:#555;border-radius:50%"></div><div class="abs" style="left:2942.2px;top:949.7px;width:4.6px;height:4.6px;background:#555;border-radius:50%"></div><div class="abs" style="left:2432.0px;top:1000.0px;width:261.0px;height:57.7px;background:#e2e2e2;border-radius:7px"></div><svg class="abs" style="left:2452.0px;top:1017.0px;" width="25" height="25" viewBox="0 0 25 25" fill="none" stroke-linecap="round" stroke-linejoin="round"><g stroke="#333" stroke-width="2.4"><circle cx="4" cy="3.8" r="2.6" fill="#333"/><circle cx="4" cy="21" r="2.6"/><circle cx="20" cy="21" r="2.6" fill="#333"/><path d="M4 6.5 V18.3"/><path d="M20 18.3 V10 a5 5 0 0 0 -5 -5 H10"/><path d="M13 1.5 L9.5 5 L13 8.5"/></g></svg><div class="t" style="left:2487.0px;top:1015.5px;font-size:27px;color:#2b2b2b;font-weight:700;font-family:'Liberation Sans', sans-serif;">Open PR #7</div><svg class="abs" style="left:2649.0px;top:1017.0px;" width="26" height="25" viewBox="0 0 26 25" fill="none" stroke-linecap="round" stroke-linejoin="round"><g stroke="#333" stroke-width="2.4"><path d="M11 4 H3 a1.5 1.5 0 0 0 -1.5 1.5 V22 a1.5 1.5 0 0 0 1.5 1.5 H19.5 a1.5 1.5 0 0 0 1.5 -1.5 V14"/><path d="M15 1.5 H24.5 V11"/><path d="M24.5 1.5 L11.5 14.5"/></g></svg><div class="abs" style="left:2416.0px;top:1090.0px;width:566.0px;height:157.5px;background:#ffffff;border-radius:10px"></div><svg class="abs" style="left:2437.0px;top:1117.0px;" width="26" height="26" viewBox="0 0 26 26" fill="none" stroke-linecap="round" stroke-linejoin="round"><g stroke="#666" stroke-width="2.3"><circle cx="4.5" cy="20.5" r="3.3"/><circle cx="4.5" cy="4.5" r="3.3"/><circle cx="20.5" cy="4.5" r="3.3" fill="#666"/><path d="M4.5 7.8 V17.2"/><path d="M20.5 7.8 C20.5 12 17 12.5 12 12.5 H4.5"/></g></svg><div class="t" style="left:2481.0px;top:1116.5px;font-size:30px;color:#666;font-weight:700;font-family:'Liberation Sans', sans-serif;">Working Branch</div><div class="abs" style="left:2432.5px;top:1170.6px;width:532.5px;height:60.8px;background:#f2f2f2;border:2px solid #d5d5d5;border-radius:7px"></div><div class="t" style="left:2450.0px;top:1186.0px;font-size:29.4px;color:#333;font-weight:400;font-family:'Liberation Sans', sans-serif;">vk/4e2a-explore-the-code</div><svg class="abs" style="left:2917.0px;top:1186.0px;" width="29" height="29" viewBox="0 0 29 29" fill="none" stroke-linecap="round" stroke-linejoin="round"><g stroke="#555" stroke-width="2.2"><path d="M1.5 27.5 V21.5 L19 4 a3 3 0 0 1 4.5 0 L25 5.5 a3 3 0 0 1 0 4.5 L7.5 27.5 Z"/><path d="M16.5 6.5 L22.5 12.5"/><path d="M7.5 27.5 H27.5"/></g></svg><div class="abs" style="left:2400.0px;top:1264.0px;width:590.0px;height:2.0px;background:#d6d6d6;"></div><div class="t" style="left:2417.0px;top:1283.2px;font-size:31px;color:#2b2b2b;font-weight:700;font-family:'Liberation Sans', sans-serif;">Terminal</div><svg class="abs" style="left:2917.0px;top:1286.0px;" width="24" height="23" viewBox="0 0 24 23" fill="none" stroke-linecap="round" stroke-linejoin="round"><g stroke="#555" stroke-width="2.5"><path d="M22.5 1.5 L14 10"/><path d="M15 1.5 H22.5 V9"/><path d="M1.5 21.5 L10 13"/><path d="M1.5 14 V21.5 H9"/></g></svg><svg class="abs" style="left:2962.6px;top:1288.0px;" width="11" height="20" viewBox="0 0 11 20" fill="none" stroke-linecap="round" stroke-linejoin="round"><path d="M0 0 V20 L11 10.0 Z" fill="#555"/></svg><div class="abs" style="left:2400.0px;top:1330.0px;width:590.0px;height:2.0px;background:#d6d6d6;"></div><div class="t" style="left:2417.0px;top:1349.4px;font-size:31px;color:#2b2b2b;font-weight:700;font-family:'Liberation Sans', sans-serif;">Notes</div><svg class="abs" style="left:2962.6px;top:1354.0px;" width="11" height="20" viewBox="0 0 11 20" fill="none" stroke-linecap="round" stroke-linejoin="round"><path d="M0 0 V20 L11 10.0 Z" fill="#555"/></svg><div class="abs" style="left:2400.0px;top:1396.0px;width:590.0px;height:2.0px;background:#d6d6d6;"></div></body></html>
